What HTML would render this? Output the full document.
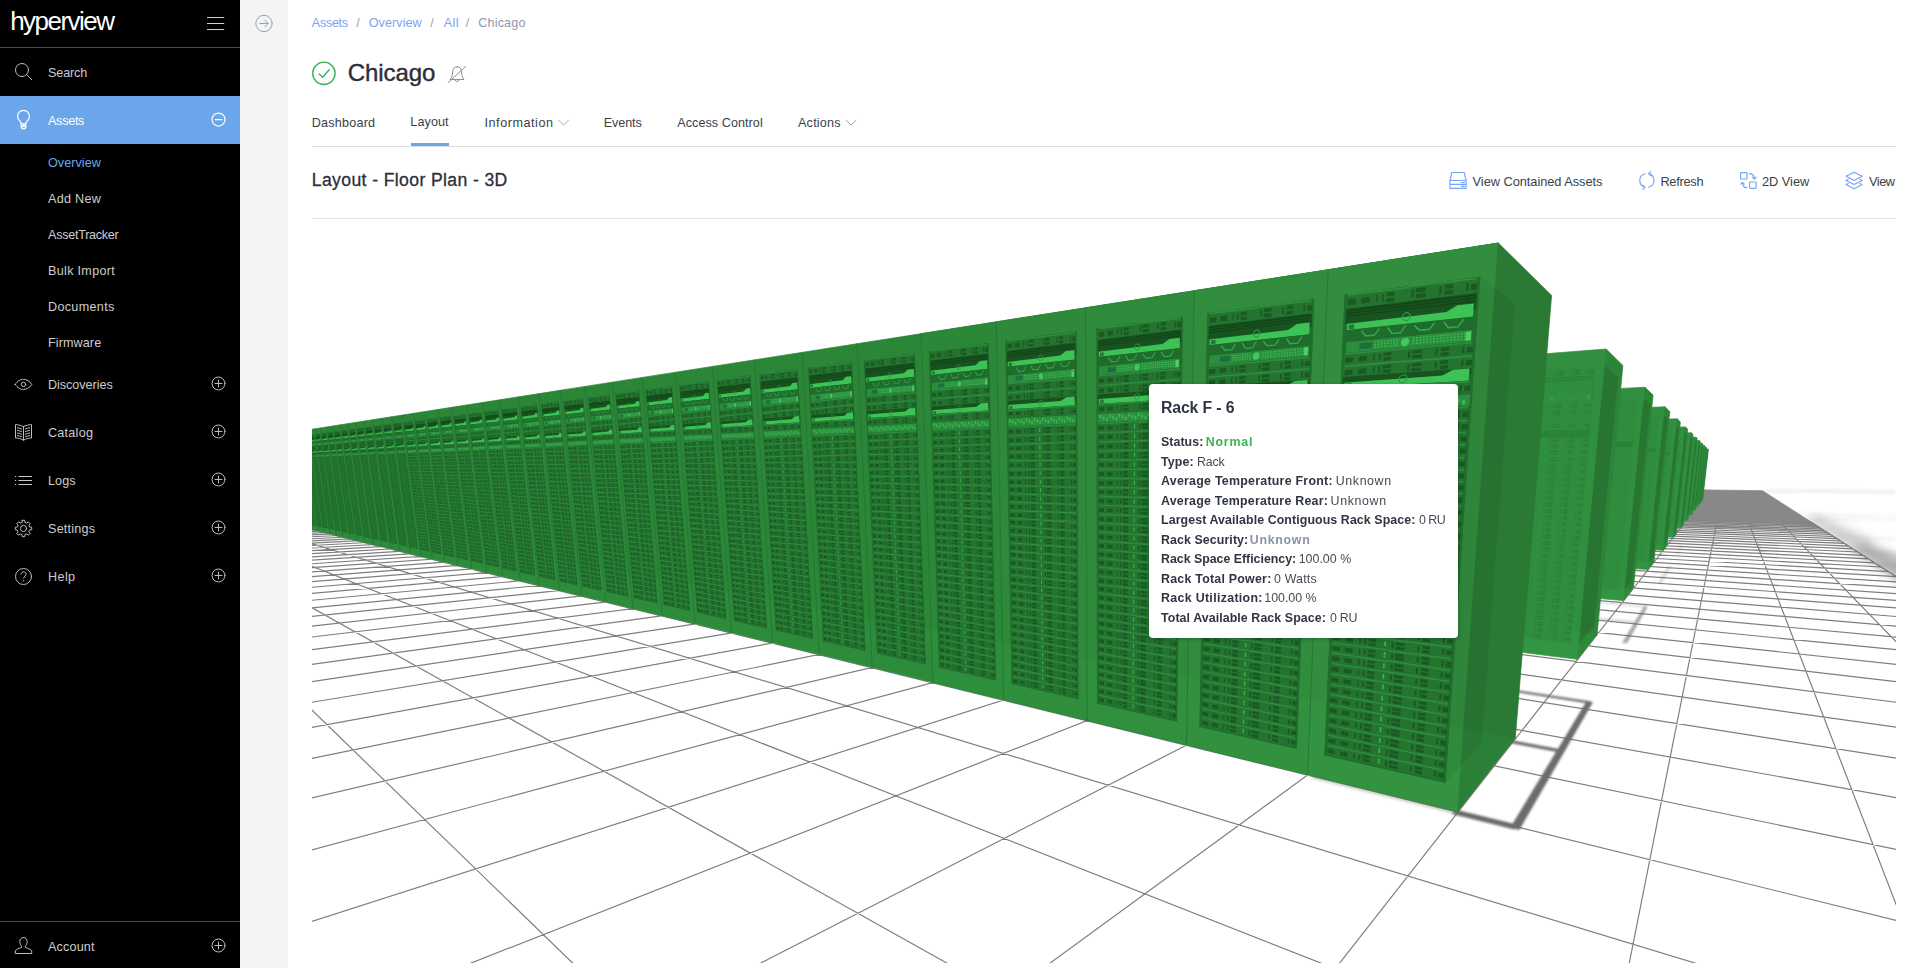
<!DOCTYPE html>
<html lang="en">
<head>
<meta charset="utf-8">
<title>Chicago - Layout - Hyperview</title>
<style>
*{box-sizing:border-box;margin:0;padding:0}
html,body{width:1920px;height:969px;overflow:hidden;background:#fff}
body{font-family:"Liberation Sans","DejaVu Sans",sans-serif;font-size:14px;color:#2a2e36;position:relative}
.abs{position:absolute}
#side{position:absolute;left:0;top:0;width:240px;height:968px;background:#000;color:#d4d4d4}
#strip{position:absolute;left:240px;top:0;width:48px;height:968px;background:#f4f4f4}
#side .hdr{position:absolute;left:0;top:0;width:240px;height:48px;border-bottom:1px solid #4a4a4a}
#side .row{position:absolute;left:0;width:240px;height:48px}
#side .row .lbl{position:absolute;left:48px;top:0;line-height:48px;font-size:13.5px;white-space:nowrap}
#side .row svg.ic{position:absolute;left:14px;top:14px}
#side .row svg.pm{position:absolute;left:210px;top:15px}
#side .sub{position:absolute;left:48px;font-size:13.5px;line-height:36px;height:36px;white-space:nowrap;color:#cfcfcf}
#side .act{background:#6ba5ea;color:#fff}
#side .acct{border-top:1px solid #4a4a4a}
#main{position:absolute;left:288px;top:0;width:1632px;height:969px;background:#fff}
.t{position:absolute;white-space:nowrap;line-height:1}
.bc{font-size:13px;color:#6f9ee8}
.bc.sep{color:#8a8f98}
.bc.cur{color:#8a8f98}
.tab{font-size:13.5px;color:#2f3542}
.tb{font-size:13.5px;color:#2f3542}
#scene{position:absolute;left:312px;top:219px;width:1584px;height:744px;overflow:hidden;background:#fff}
#tip{position:absolute;left:1149px;top:384px;width:309px;height:254px;background:#fff;border-radius:4px;box-shadow:0 1px 4px rgba(0,0,0,.25)}
#tip .h{position:absolute;left:12.5px;top:15px;font-size:16px;font-weight:bold;color:#2f3542;white-space:nowrap;line-height:18px}
#tip .l{position:absolute;left:12.5px;font-size:12.5px;color:#3a3f4a;white-space:nowrap;line-height:16px}
#tip .l b{color:#2f3542}
</style>
</head>
<body>
<div id="main">
</div>
<span class="t" style="left:311.8px;top:16.8px;font-size:12.6px;color:#7ba4ee;letter-spacing:-0.3px;">Assets</span>
<span class="t" style="left:356.3px;top:16.8px;font-size:12.6px;color:#9aa0ab;letter-spacing:1.4px;">/</span>
<span class="t" style="left:368.7px;top:16.8px;font-size:12.6px;color:#7ba4ee;letter-spacing:0.071px;">Overview</span>
<span class="t" style="left:430.3px;top:16.8px;font-size:12.6px;color:#9aa0ab;letter-spacing:1.3px;">/</span>
<span class="t" style="left:443.8px;top:16.8px;font-size:12.6px;color:#7ba4ee;letter-spacing:0.35px;">All</span>
<span class="t" style="left:465.8px;top:16.8px;font-size:12.6px;color:#9aa0ab;letter-spacing:1.3px;">/</span>
<span class="t" style="left:478.2px;top:16.8px;font-size:12.6px;color:#8d98ab;letter-spacing:0.183px;">Chicago</span>
<span class="t" style="left:347.7px;top:60.8px;font-size:24px;color:#2b2f38;letter-spacing:-0.067px;-webkit-text-stroke:0.4px #2b2f38;">Chicago</span>
<span class="t" style="left:311.8px;top:116.8px;font-size:12.6px;color:#3a3f4a;letter-spacing:0.212px;">Dashboard</span>
<span class="t" style="left:410.3px;top:115.8px;font-size:12.6px;color:#3a3f4a;letter-spacing:0.1px;">Layout</span>
<span class="t" style="left:484.5px;top:116.8px;font-size:12.6px;color:#3a3f4a;letter-spacing:0.55px;">Information</span>
<span class="t" style="left:603.7px;top:116.8px;font-size:12.6px;color:#3a3f4a;letter-spacing:-0.08px;">Events</span>
<span class="t" style="left:677.3px;top:116.8px;font-size:12.6px;color:#3a3f4a;letter-spacing:0.054px;">Access Control</span>
<span class="t" style="left:798px;top:116.8px;font-size:12.6px;color:#3a3f4a;letter-spacing:0.217px;">Actions</span>
<span class="t" style="left:311.8px;top:171.8px;font-size:17.6px;color:#2b2f38;letter-spacing:0.378px;-webkit-text-stroke:0.3px #2b2f38;">Layout - Floor Plan - 3D</span>
<span class="t" style="left:1472.6px;top:175.7px;font-size:12.8px;color:#3a3f4a;letter-spacing:-0.04px;">View Contained Assets</span>
<span class="t" style="left:1660.4px;top:175.7px;font-size:12.8px;color:#3a3f4a;letter-spacing:-0.267px;">Refresh</span>
<span class="t" style="left:1762px;top:175.7px;font-size:12.8px;color:#3a3f4a;letter-spacing:-0.033px;">2D View</span>
<span class="t" style="left:1869.1px;top:175.7px;font-size:12.8px;color:#3a3f4a;letter-spacing:-0.533px;">View</span>
<svg class="abs" style="left:310px;top:59px" width="28" height="28" viewBox="310 59 28 28" fill="none" stroke="#3fb157" stroke-width="1.4" stroke-linecap="round" stroke-linejoin="round"><circle cx="323.9" cy="73.3" r="11.2"/><path d="M319.2 73.9L322.6 77.2L329.2 69.8"/></svg>
<svg class="abs" style="left:445px;top:62px" width="24" height="24" viewBox="445 62 24 24" fill="none" stroke="#8a8f99" stroke-width="1" stroke-linecap="round" stroke-linejoin="round"><path d="M457.1 66.7C454.2 66.7 452.7 69 452.7 71.7C452.7 75.4 451.6 77.6 450.2 79.5H464C462.6 77.6 461.5 75.4 461.5 71.7C461.5 69 460 66.7 457.1 66.7Z"/><path d="M455 79.8A2.2 2.4 0 0 0 459.2 79.8"/><path d="M448.2 82.7L465.8 66.3"/></svg>
<svg class="abs" style="left:555px;top:114px" width="17" height="16" viewBox="555 114 17 16" fill="none" stroke="#a0a5af" stroke-width="1" stroke-linecap="round" stroke-linejoin="round"><path d="M558.5 120.2L563.5 125L568.5 120.2"/></svg>
<svg class="abs" style="left:843px;top:114px" width="17" height="16" viewBox="843 114 17 16" fill="none" stroke="#a0a5af" stroke-width="1" stroke-linecap="round" stroke-linejoin="round"><path d="M846 120.2L851 125L856 120.2"/></svg>
<div class="abs" style="left:312px;top:146px;width:1584px;height:1px;background:#dcdcdc"></div>
<div class="abs" style="left:411px;top:143px;width:38px;height:3px;background:#6ba5ea"></div>
<div class="abs" style="left:312px;top:218px;width:1584px;height:1px;background:#e2e2e2"></div>
<svg class="abs" style="left:1446px;top:168px" width="24" height="24" viewBox="1446 168 24 24" fill="none" stroke="#78a5f0" stroke-width="1.15" stroke-linecap="round" stroke-linejoin="round"><path d="M1449.9 180.5L1451.9 172.5H1464.1L1466.1 180.5V188.3H1449.9ZM1449.9 180.5H1466.1M1449.9 184.4H1466.1M1461.4 182.5h3M1461.4 186.4h3"/></svg>
<svg class="abs" style="left:1635px;top:168px" width="24" height="24" viewBox="1635 168 24 24" fill="none" stroke="#78a5f0" stroke-width="1.15" stroke-linecap="round" stroke-linejoin="round"><path d="M1645.2 173.8A6.9 6.9 0 0 0 1644.6 187.1M1648.6 187.2A6.9 6.9 0 0 0 1649.2 173.9"/><path d="M1642.6 185.2L1645 187.3L1642.8 189.4M1651 175.8L1648.7 173.7L1650.9 171.6"/></svg>
<svg class="abs" style="left:1737px;top:168px" width="24" height="24" viewBox="1737 168 24 24" fill="none" stroke="#78a5f0" stroke-width="1.15" stroke-linecap="round" stroke-linejoin="round"><rect x="1740.6" y="172.6" width="6.4" height="6.4" rx="0.8"/><rect x="1749.6" y="182" width="6.6" height="6.4" rx="0.8"/><path d="M1749.4 173.6C1752.4 173.6 1754.3 175.6 1754.4 178.8M1752.4 177.2L1754.4 179.2L1756.4 177.2M1747 187.6C1744.4 187.6 1742.6 185.8 1742.4 182.6M1740.6 184.2L1742.4 182.3L1744.3 184.2"/></svg>
<svg class="abs" style="left:1843px;top:168px" width="24" height="24" viewBox="1843 168 24 24" fill="none" stroke="#78a5f0" stroke-width="1.15" stroke-linecap="round" stroke-linejoin="round"><path d="M1854.1 172.3L1862.2 176.3L1854.1 180.4L1846 176.3ZM1848.2 179.3L1846 180.4L1854.1 184.5L1862.2 180.4L1860 179.3M1848.2 183.5L1846 184.6L1854.1 188.7L1862.2 184.6L1860 183.5"/></svg>
<div id="scene">
<svg width="1584" height="744" viewBox="0 0 1584 744" style="position:absolute;left:0;top:0">
<defs><filter id="b1" x="-20%" y="-20%" width="140%" height="140%"><feGaussianBlur stdDeviation="0.9"/></filter>
<filter id="b2" x="-50%" y="-50%" width="200%" height="200%"><feGaussianBlur stdDeviation="4"/></filter>
<filter id="b3" x="-50%" y="-50%" width="200%" height="200%"><feGaussianBlur stdDeviation="1.6"/></filter>
<g id="txd"><path d="M14.3 17.2h75.8v1.144h-75.8zM14.3 53.2h75.8v0.975h-75.8zM14.3 60.7h75.8v0.975h-75.8zM14.3 75.2h75.8v0.923h-75.8zM14.3 90h75.8v0.9376h-75.8zM14.3 97.21h75.8v0.9376h-75.8zM14.3 104.4h75.8v0.9376h-75.8zM14.3 111.6h75.8v0.9376h-75.8zM14.3 118.8h75.8v0.9376h-75.8zM14.3 126.1h75.8v0.9376h-75.8zM14.3 133.3h75.8v0.9376h-75.8zM14.3 140.5h75.8v0.9376h-75.8zM14.3 147.7h75.8v0.9376h-75.8zM14.3 154.9h75.8v0.9376h-75.8zM14.3 162.1h75.8v0.9376h-75.8zM14.3 169.3h75.8v0.9376h-75.8zM14.3 176.6h75.8v0.9376h-75.8zM14.3 183.8h75.8v0.9376h-75.8zM14.3 191h75.8v0.9376h-75.8zM14.3 198.2h75.8v0.9376h-75.8zM14.3 205.4h75.8v0.9376h-75.8zM14.3 212.6h75.8v0.9376h-75.8zM14.3 219.8h75.8v0.9376h-75.8zM14.3 227h75.8v0.9376h-75.8zM14.3 234.2h75.8v0.9376h-75.8zM14.3 241.5h75.8v0.9376h-75.8zM14.3 248.7h75.8v0.9376h-75.8zM14.3 255.9h75.8v0.9376h-75.8zM14.3 263.1h75.8v0.9376h-75.8zM14.3 270.3h75.8v0.9376h-75.8zM14.3 277.5h75.8v0.9376h-75.8zM14.3 284.7h75.8v0.9376h-75.8zM14.3 292h75.8v0.9376h-75.8zM14.3 299.2h75.8v0.9376h-75.8zM14.3 306.4h75.8v0.9376h-75.8zM14.3 313.6h75.8v0.9376h-75.8z" fill="#2e8f3f"/><path d="M14.5 20.54h5v3.52h-5zM22.9 20.54h5.1v3.52h-5.1zM87.2 20.54h3.6v3.52h-3.6zM38.5 19.31h4.9v2.288h-4.9zM38.5 22.66h4.9v2.288h-4.9zM56.2 19.31h5.5v2.288h-5.5zM56.2 22.66h5.5v2.288h-5.5zM72.5 19.31h4.5v2.288h-4.5zM72.5 22.66h4.5v2.288h-4.5zM32.2 19.84h1v4.4h-1zM35.6 19.84h1.2v4.4h-1.2zM53.8 19.84h1.2v4.4h-1.2zM69.4 19.84h1.2v4.4h-1.2zM84.6 19.84h1.2v4.4h-1.2zM14.5 56.05h5v3h-5zM22.9 56.05h5.1v3h-5.1zM87.2 56.05h3.6v3h-3.6zM38.5 55h4.9v1.95h-4.9zM38.5 57.85h4.9v1.95h-4.9zM56.2 55h5.5v1.95h-5.5zM56.2 57.85h5.5v1.95h-5.5zM72.5 55h4.5v1.95h-4.5zM72.5 57.85h4.5v1.95h-4.5zM32.2 55.45h1v3.75h-1zM35.6 55.45h1.2v3.75h-1.2zM53.8 55.45h1.2v3.75h-1.2zM69.4 55.45h1.2v3.75h-1.2zM84.6 55.45h1.2v3.75h-1.2zM14.5 63.55h5v3h-5zM22.9 63.55h5.1v3h-5.1zM87.2 63.55h3.6v3h-3.6zM38.5 62.5h4.9v1.95h-4.9zM38.5 65.35h4.9v1.95h-4.9zM56.2 62.5h5.5v1.95h-5.5zM56.2 65.35h5.5v1.95h-5.5zM72.5 62.5h4.5v1.95h-4.5zM72.5 65.35h4.5v1.95h-4.5zM32.2 62.95h1v3.75h-1zM35.6 62.95h1.2v3.75h-1.2zM53.8 62.95h1.2v3.75h-1.2zM69.4 62.95h1.2v3.75h-1.2zM84.6 62.95h1.2v3.75h-1.2zM14.5 77.9h5v2.84h-5zM22.9 77.9h5.1v2.84h-5.1zM87.2 77.9h3.6v2.84h-3.6zM38.5 76.9h4.9v1.846h-4.9zM38.5 79.6h4.9v1.846h-4.9zM56.2 76.9h5.5v1.846h-5.5zM56.2 79.6h5.5v1.846h-5.5zM72.5 76.9h4.5v1.846h-4.5zM72.5 79.6h4.5v1.846h-4.5zM32.2 77.33h1v3.55h-1zM35.6 77.33h1.2v3.55h-1.2zM53.8 77.33h1.2v3.55h-1.2zM69.4 77.33h1.2v3.55h-1.2zM84.6 77.33h1.2v3.55h-1.2zM14.5 92.74h5v2.885h-5zM22.9 92.74h5.1v2.885h-5.1zM87.2 92.74h3.6v2.885h-3.6zM38.5 91.73h4.9v1.875h-4.9zM38.5 94.47h4.9v1.875h-4.9zM56.2 91.73h5.5v1.875h-5.5zM56.2 94.47h5.5v1.875h-5.5zM72.5 91.73h4.5v1.875h-4.5zM72.5 94.47h4.5v1.875h-4.5zM32.2 92.16h1v3.606h-1zM35.6 92.16h1.2v3.606h-1.2zM53.8 92.16h1.2v3.606h-1.2zM69.4 92.16h1.2v3.606h-1.2zM84.6 92.16h1.2v3.606h-1.2zM14.5 99.95h5v2.885h-5zM22.9 99.95h5.1v2.885h-5.1zM87.2 99.95h3.6v2.885h-3.6zM38.5 98.94h4.9v1.875h-4.9zM38.5 101.7h4.9v1.875h-4.9zM56.2 98.94h5.5v1.875h-5.5zM56.2 101.7h5.5v1.875h-5.5zM72.5 98.94h4.5v1.875h-4.5zM72.5 101.7h4.5v1.875h-4.5zM32.2 99.38h1v3.606h-1zM35.6 99.38h1.2v3.606h-1.2zM53.8 99.38h1.2v3.606h-1.2zM69.4 99.38h1.2v3.606h-1.2zM84.6 99.38h1.2v3.606h-1.2zM14.5 107.2h5v2.885h-5zM22.9 107.2h5.1v2.885h-5.1zM87.2 107.2h3.6v2.885h-3.6zM38.5 106.2h4.9v1.875h-4.9zM38.5 108.9h4.9v1.875h-4.9zM56.2 106.2h5.5v1.875h-5.5zM56.2 108.9h5.5v1.875h-5.5zM72.5 106.2h4.5v1.875h-4.5zM72.5 108.9h4.5v1.875h-4.5zM32.2 106.6h1v3.606h-1zM35.6 106.6h1.2v3.606h-1.2zM53.8 106.6h1.2v3.606h-1.2zM69.4 106.6h1.2v3.606h-1.2zM84.6 106.6h1.2v3.606h-1.2zM14.5 114.4h5v2.885h-5zM22.9 114.4h5.1v2.885h-5.1zM87.2 114.4h3.6v2.885h-3.6zM38.5 113.4h4.9v1.875h-4.9zM38.5 116.1h4.9v1.875h-4.9zM56.2 113.4h5.5v1.875h-5.5zM56.2 116.1h5.5v1.875h-5.5zM72.5 113.4h4.5v1.875h-4.5zM72.5 116.1h4.5v1.875h-4.5zM32.2 113.8h1v3.606h-1zM35.6 113.8h1.2v3.606h-1.2zM53.8 113.8h1.2v3.606h-1.2zM69.4 113.8h1.2v3.606h-1.2zM84.6 113.8h1.2v3.606h-1.2zM14.5 121.6h5v2.885h-5zM22.9 121.6h5.1v2.885h-5.1zM87.2 121.6h3.6v2.885h-3.6zM38.5 120.6h4.9v1.875h-4.9zM38.5 123.3h4.9v1.875h-4.9zM56.2 120.6h5.5v1.875h-5.5zM56.2 123.3h5.5v1.875h-5.5zM72.5 120.6h4.5v1.875h-4.5zM72.5 123.3h4.5v1.875h-4.5zM32.2 121h1v3.606h-1zM35.6 121h1.2v3.606h-1.2zM53.8 121h1.2v3.606h-1.2zM69.4 121h1.2v3.606h-1.2zM84.6 121h1.2v3.606h-1.2zM14.5 128.8h5v2.885h-5zM22.9 128.8h5.1v2.885h-5.1zM87.2 128.8h3.6v2.885h-3.6zM38.5 127.8h4.9v1.875h-4.9zM38.5 130.5h4.9v1.875h-4.9zM56.2 127.8h5.5v1.875h-5.5zM56.2 130.5h5.5v1.875h-5.5zM72.5 127.8h4.5v1.875h-4.5zM72.5 130.5h4.5v1.875h-4.5zM32.2 128.2h1v3.606h-1zM35.6 128.2h1.2v3.606h-1.2zM53.8 128.2h1.2v3.606h-1.2zM69.4 128.2h1.2v3.606h-1.2zM84.6 128.2h1.2v3.606h-1.2zM14.5 136h5v2.885h-5zM22.9 136h5.1v2.885h-5.1zM87.2 136h3.6v2.885h-3.6zM38.5 135h4.9v1.875h-4.9zM38.5 137.7h4.9v1.875h-4.9zM56.2 135h5.5v1.875h-5.5zM56.2 137.7h5.5v1.875h-5.5zM72.5 135h4.5v1.875h-4.5zM72.5 137.7h4.5v1.875h-4.5zM32.2 135.4h1v3.606h-1zM35.6 135.4h1.2v3.606h-1.2zM53.8 135.4h1.2v3.606h-1.2zM69.4 135.4h1.2v3.606h-1.2zM84.6 135.4h1.2v3.606h-1.2zM14.5 143.2h5v2.885h-5zM22.9 143.2h5.1v2.885h-5.1zM87.2 143.2h3.6v2.885h-3.6zM38.5 142.2h4.9v1.875h-4.9zM38.5 145h4.9v1.875h-4.9zM56.2 142.2h5.5v1.875h-5.5zM56.2 145h5.5v1.875h-5.5zM72.5 142.2h4.5v1.875h-4.5zM72.5 145h4.5v1.875h-4.5zM32.2 142.7h1v3.606h-1zM35.6 142.7h1.2v3.606h-1.2zM53.8 142.7h1.2v3.606h-1.2zM69.4 142.7h1.2v3.606h-1.2zM84.6 142.7h1.2v3.606h-1.2zM14.5 150.4h5v2.885h-5zM22.9 150.4h5.1v2.885h-5.1zM87.2 150.4h3.6v2.885h-3.6zM38.5 149.4h4.9v1.875h-4.9zM38.5 152.2h4.9v1.875h-4.9zM56.2 149.4h5.5v1.875h-5.5zM56.2 152.2h5.5v1.875h-5.5zM72.5 149.4h4.5v1.875h-4.5zM72.5 152.2h4.5v1.875h-4.5zM32.2 149.9h1v3.606h-1zM35.6 149.9h1.2v3.606h-1.2zM53.8 149.9h1.2v3.606h-1.2zM69.4 149.9h1.2v3.606h-1.2zM84.6 149.9h1.2v3.606h-1.2zM14.5 157.7h5v2.885h-5zM22.9 157.7h5.1v2.885h-5.1zM87.2 157.7h3.6v2.885h-3.6zM38.5 156.6h4.9v1.875h-4.9zM38.5 159.4h4.9v1.875h-4.9zM56.2 156.6h5.5v1.875h-5.5zM56.2 159.4h5.5v1.875h-5.5zM72.5 156.6h4.5v1.875h-4.5zM72.5 159.4h4.5v1.875h-4.5zM32.2 157.1h1v3.606h-1zM35.6 157.1h1.2v3.606h-1.2zM53.8 157.1h1.2v3.606h-1.2zM69.4 157.1h1.2v3.606h-1.2zM84.6 157.1h1.2v3.606h-1.2zM14.5 164.9h5v2.885h-5zM22.9 164.9h5.1v2.885h-5.1zM87.2 164.9h3.6v2.885h-3.6zM38.5 163.9h4.9v1.875h-4.9zM38.5 166.6h4.9v1.875h-4.9zM56.2 163.9h5.5v1.875h-5.5zM56.2 166.6h5.5v1.875h-5.5zM72.5 163.9h4.5v1.875h-4.5zM72.5 166.6h4.5v1.875h-4.5zM32.2 164.3h1v3.606h-1zM35.6 164.3h1.2v3.606h-1.2zM53.8 164.3h1.2v3.606h-1.2zM69.4 164.3h1.2v3.606h-1.2zM84.6 164.3h1.2v3.606h-1.2zM14.5 172.1h5v2.885h-5zM22.9 172.1h5.1v2.885h-5.1zM87.2 172.1h3.6v2.885h-3.6zM38.5 171.1h4.9v1.875h-4.9zM38.5 173.8h4.9v1.875h-4.9zM56.2 171.1h5.5v1.875h-5.5zM56.2 173.8h5.5v1.875h-5.5zM72.5 171.1h4.5v1.875h-4.5zM72.5 173.8h4.5v1.875h-4.5zM32.2 171.5h1v3.606h-1zM35.6 171.5h1.2v3.606h-1.2zM53.8 171.5h1.2v3.606h-1.2zM69.4 171.5h1.2v3.606h-1.2zM84.6 171.5h1.2v3.606h-1.2zM14.5 179.3h5v2.885h-5zM22.9 179.3h5.1v2.885h-5.1zM87.2 179.3h3.6v2.885h-3.6zM38.5 178.3h4.9v1.875h-4.9zM38.5 181h4.9v1.875h-4.9zM56.2 178.3h5.5v1.875h-5.5zM56.2 181h5.5v1.875h-5.5zM72.5 178.3h4.5v1.875h-4.5zM72.5 181h4.5v1.875h-4.5zM32.2 178.7h1v3.606h-1zM35.6 178.7h1.2v3.606h-1.2zM53.8 178.7h1.2v3.606h-1.2zM69.4 178.7h1.2v3.606h-1.2zM84.6 178.7h1.2v3.606h-1.2zM14.5 186.5h5v2.885h-5zM22.9 186.5h5.1v2.885h-5.1zM87.2 186.5h3.6v2.885h-3.6zM38.5 185.5h4.9v1.875h-4.9zM38.5 188.2h4.9v1.875h-4.9zM56.2 185.5h5.5v1.875h-5.5zM56.2 188.2h5.5v1.875h-5.5zM72.5 185.5h4.5v1.875h-4.5zM72.5 188.2h4.5v1.875h-4.5zM32.2 185.9h1v3.606h-1zM35.6 185.9h1.2v3.606h-1.2zM53.8 185.9h1.2v3.606h-1.2zM69.4 185.9h1.2v3.606h-1.2zM84.6 185.9h1.2v3.606h-1.2zM14.5 193.7h5v2.885h-5zM22.9 193.7h5.1v2.885h-5.1zM87.2 193.7h3.6v2.885h-3.6zM38.5 192.7h4.9v1.875h-4.9zM38.5 195.4h4.9v1.875h-4.9zM56.2 192.7h5.5v1.875h-5.5zM56.2 195.4h5.5v1.875h-5.5zM72.5 192.7h4.5v1.875h-4.5zM72.5 195.4h4.5v1.875h-4.5zM32.2 193.1h1v3.606h-1zM35.6 193.1h1.2v3.606h-1.2zM53.8 193.1h1.2v3.606h-1.2zM69.4 193.1h1.2v3.606h-1.2zM84.6 193.1h1.2v3.606h-1.2zM14.5 200.9h5v2.885h-5zM22.9 200.9h5.1v2.885h-5.1zM87.2 200.9h3.6v2.885h-3.6zM38.5 199.9h4.9v1.875h-4.9zM38.5 202.7h4.9v1.875h-4.9zM56.2 199.9h5.5v1.875h-5.5zM56.2 202.7h5.5v1.875h-5.5zM72.5 199.9h4.5v1.875h-4.5zM72.5 202.7h4.5v1.875h-4.5zM32.2 200.4h1v3.606h-1zM35.6 200.4h1.2v3.606h-1.2zM53.8 200.4h1.2v3.606h-1.2zM69.4 200.4h1.2v3.606h-1.2zM84.6 200.4h1.2v3.606h-1.2zM14.5 208.1h5v2.885h-5zM22.9 208.1h5.1v2.885h-5.1zM87.2 208.1h3.6v2.885h-3.6zM38.5 207.1h4.9v1.875h-4.9zM38.5 209.9h4.9v1.875h-4.9zM56.2 207.1h5.5v1.875h-5.5zM56.2 209.9h5.5v1.875h-5.5zM72.5 207.1h4.5v1.875h-4.5zM72.5 209.9h4.5v1.875h-4.5zM32.2 207.6h1v3.606h-1zM35.6 207.6h1.2v3.606h-1.2zM53.8 207.6h1.2v3.606h-1.2zM69.4 207.6h1.2v3.606h-1.2zM84.6 207.6h1.2v3.606h-1.2zM14.5 215.4h5v2.885h-5zM22.9 215.4h5.1v2.885h-5.1zM87.2 215.4h3.6v2.885h-3.6zM38.5 214.3h4.9v1.875h-4.9zM38.5 217.1h4.9v1.875h-4.9zM56.2 214.3h5.5v1.875h-5.5zM56.2 217.1h5.5v1.875h-5.5zM72.5 214.3h4.5v1.875h-4.5zM72.5 217.1h4.5v1.875h-4.5zM32.2 214.8h1v3.606h-1zM35.6 214.8h1.2v3.606h-1.2zM53.8 214.8h1.2v3.606h-1.2zM69.4 214.8h1.2v3.606h-1.2zM84.6 214.8h1.2v3.606h-1.2zM14.5 222.6h5v2.885h-5zM22.9 222.6h5.1v2.885h-5.1zM87.2 222.6h3.6v2.885h-3.6zM38.5 221.6h4.9v1.875h-4.9zM38.5 224.3h4.9v1.875h-4.9zM56.2 221.6h5.5v1.875h-5.5zM56.2 224.3h5.5v1.875h-5.5zM72.5 221.6h4.5v1.875h-4.5zM72.5 224.3h4.5v1.875h-4.5zM32.2 222h1v3.606h-1zM35.6 222h1.2v3.606h-1.2zM53.8 222h1.2v3.606h-1.2zM69.4 222h1.2v3.606h-1.2zM84.6 222h1.2v3.606h-1.2zM14.5 229.8h5v2.885h-5zM22.9 229.8h5.1v2.885h-5.1zM87.2 229.8h3.6v2.885h-3.6zM38.5 228.8h4.9v1.875h-4.9zM38.5 231.5h4.9v1.875h-4.9zM56.2 228.8h5.5v1.875h-5.5zM56.2 231.5h5.5v1.875h-5.5zM72.5 228.8h4.5v1.875h-4.5zM72.5 231.5h4.5v1.875h-4.5zM32.2 229.2h1v3.606h-1zM35.6 229.2h1.2v3.606h-1.2zM53.8 229.2h1.2v3.606h-1.2zM69.4 229.2h1.2v3.606h-1.2zM84.6 229.2h1.2v3.606h-1.2zM14.5 237h5v2.885h-5zM22.9 237h5.1v2.885h-5.1zM87.2 237h3.6v2.885h-3.6zM38.5 236h4.9v1.875h-4.9zM38.5 238.7h4.9v1.875h-4.9zM56.2 236h5.5v1.875h-5.5zM56.2 238.7h5.5v1.875h-5.5zM72.5 236h4.5v1.875h-4.5zM72.5 238.7h4.5v1.875h-4.5zM32.2 236.4h1v3.606h-1zM35.6 236.4h1.2v3.606h-1.2zM53.8 236.4h1.2v3.606h-1.2zM69.4 236.4h1.2v3.606h-1.2zM84.6 236.4h1.2v3.606h-1.2zM14.5 244.2h5v2.885h-5zM22.9 244.2h5.1v2.885h-5.1zM87.2 244.2h3.6v2.885h-3.6zM38.5 243.2h4.9v1.875h-4.9zM38.5 245.9h4.9v1.875h-4.9zM56.2 243.2h5.5v1.875h-5.5zM56.2 245.9h5.5v1.875h-5.5zM72.5 243.2h4.5v1.875h-4.5zM72.5 245.9h4.5v1.875h-4.5zM32.2 243.6h1v3.606h-1zM35.6 243.6h1.2v3.606h-1.2zM53.8 243.6h1.2v3.606h-1.2zM69.4 243.6h1.2v3.606h-1.2zM84.6 243.6h1.2v3.606h-1.2zM14.5 251.4h5v2.885h-5zM22.9 251.4h5.1v2.885h-5.1zM87.2 251.4h3.6v2.885h-3.6zM38.5 250.4h4.9v1.875h-4.9zM38.5 253.1h4.9v1.875h-4.9zM56.2 250.4h5.5v1.875h-5.5zM56.2 253.1h5.5v1.875h-5.5zM72.5 250.4h4.5v1.875h-4.5zM72.5 253.1h4.5v1.875h-4.5zM32.2 250.8h1v3.606h-1zM35.6 250.8h1.2v3.606h-1.2zM53.8 250.8h1.2v3.606h-1.2zM69.4 250.8h1.2v3.606h-1.2zM84.6 250.8h1.2v3.606h-1.2zM14.5 258.6h5v2.885h-5zM22.9 258.6h5.1v2.885h-5.1zM87.2 258.6h3.6v2.885h-3.6zM38.5 257.6h4.9v1.875h-4.9zM38.5 260.4h4.9v1.875h-4.9zM56.2 257.6h5.5v1.875h-5.5zM56.2 260.4h5.5v1.875h-5.5zM72.5 257.6h4.5v1.875h-4.5zM72.5 260.4h4.5v1.875h-4.5zM32.2 258.1h1v3.606h-1zM35.6 258.1h1.2v3.606h-1.2zM53.8 258.1h1.2v3.606h-1.2zM69.4 258.1h1.2v3.606h-1.2zM84.6 258.1h1.2v3.606h-1.2zM14.5 265.8h5v2.885h-5zM22.9 265.8h5.1v2.885h-5.1zM87.2 265.8h3.6v2.885h-3.6zM38.5 264.8h4.9v1.875h-4.9zM38.5 267.6h4.9v1.875h-4.9zM56.2 264.8h5.5v1.875h-5.5zM56.2 267.6h5.5v1.875h-5.5zM72.5 264.8h4.5v1.875h-4.5zM72.5 267.6h4.5v1.875h-4.5zM32.2 265.3h1v3.606h-1zM35.6 265.3h1.2v3.606h-1.2zM53.8 265.3h1.2v3.606h-1.2zM69.4 265.3h1.2v3.606h-1.2zM84.6 265.3h1.2v3.606h-1.2zM14.5 273.1h5v2.885h-5zM22.9 273.1h5.1v2.885h-5.1zM87.2 273.1h3.6v2.885h-3.6zM38.5 272h4.9v1.875h-4.9zM38.5 274.8h4.9v1.875h-4.9zM56.2 272h5.5v1.875h-5.5zM56.2 274.8h5.5v1.875h-5.5zM72.5 272h4.5v1.875h-4.5zM72.5 274.8h4.5v1.875h-4.5zM32.2 272.5h1v3.606h-1zM35.6 272.5h1.2v3.606h-1.2zM53.8 272.5h1.2v3.606h-1.2zM69.4 272.5h1.2v3.606h-1.2zM84.6 272.5h1.2v3.606h-1.2zM14.5 280.3h5v2.885h-5zM22.9 280.3h5.1v2.885h-5.1zM87.2 280.3h3.6v2.885h-3.6zM38.5 279.3h4.9v1.875h-4.9zM38.5 282h4.9v1.875h-4.9zM56.2 279.3h5.5v1.875h-5.5zM56.2 282h5.5v1.875h-5.5zM72.5 279.3h4.5v1.875h-4.5zM72.5 282h4.5v1.875h-4.5zM32.2 279.7h1v3.606h-1zM35.6 279.7h1.2v3.606h-1.2zM53.8 279.7h1.2v3.606h-1.2zM69.4 279.7h1.2v3.606h-1.2zM84.6 279.7h1.2v3.606h-1.2zM14.5 287.5h5v2.885h-5zM22.9 287.5h5.1v2.885h-5.1zM87.2 287.5h3.6v2.885h-3.6zM38.5 286.5h4.9v1.875h-4.9zM38.5 289.2h4.9v1.875h-4.9zM56.2 286.5h5.5v1.875h-5.5zM56.2 289.2h5.5v1.875h-5.5zM72.5 286.5h4.5v1.875h-4.5zM72.5 289.2h4.5v1.875h-4.5zM32.2 286.9h1v3.606h-1zM35.6 286.9h1.2v3.606h-1.2zM53.8 286.9h1.2v3.606h-1.2zM69.4 286.9h1.2v3.606h-1.2zM84.6 286.9h1.2v3.606h-1.2zM14.5 294.7h5v2.885h-5zM22.9 294.7h5.1v2.885h-5.1zM87.2 294.7h3.6v2.885h-3.6zM38.5 293.7h4.9v1.875h-4.9zM38.5 296.4h4.9v1.875h-4.9zM56.2 293.7h5.5v1.875h-5.5zM56.2 296.4h5.5v1.875h-5.5zM72.5 293.7h4.5v1.875h-4.5zM72.5 296.4h4.5v1.875h-4.5zM32.2 294.1h1v3.606h-1zM35.6 294.1h1.2v3.606h-1.2zM53.8 294.1h1.2v3.606h-1.2zM69.4 294.1h1.2v3.606h-1.2zM84.6 294.1h1.2v3.606h-1.2zM14.5 301.9h5v2.885h-5zM22.9 301.9h5.1v2.885h-5.1zM87.2 301.9h3.6v2.885h-3.6zM38.5 300.9h4.9v1.875h-4.9zM38.5 303.6h4.9v1.875h-4.9zM56.2 300.9h5.5v1.875h-5.5zM56.2 303.6h5.5v1.875h-5.5zM72.5 300.9h4.5v1.875h-4.5zM72.5 303.6h4.5v1.875h-4.5zM32.2 301.3h1v3.606h-1zM35.6 301.3h1.2v3.606h-1.2zM53.8 301.3h1.2v3.606h-1.2zM69.4 301.3h1.2v3.606h-1.2zM84.6 301.3h1.2v3.606h-1.2zM14.5 309.1h5v2.885h-5zM22.9 309.1h5.1v2.885h-5.1zM87.2 309.1h3.6v2.885h-3.6zM38.5 308.1h4.9v1.875h-4.9zM38.5 310.8h4.9v1.875h-4.9zM56.2 308.1h5.5v1.875h-5.5zM56.2 310.8h5.5v1.875h-5.5zM72.5 308.1h4.5v1.875h-4.5zM72.5 310.8h4.5v1.875h-4.5zM32.2 308.5h1v3.606h-1zM35.6 308.5h1.2v3.606h-1.2zM53.8 308.5h1.2v3.606h-1.2zM69.4 308.5h1.2v3.606h-1.2zM84.6 308.5h1.2v3.606h-1.2zM14.5 316.3h5v2.885h-5zM22.9 316.3h5.1v2.885h-5.1zM87.2 316.3h3.6v2.885h-3.6zM38.5 315.3h4.9v1.875h-4.9zM38.5 318.1h4.9v1.875h-4.9zM56.2 315.3h5.5v1.875h-5.5zM56.2 318.1h5.5v1.875h-5.5zM72.5 315.3h4.5v1.875h-4.5zM72.5 318.1h4.5v1.875h-4.5zM32.2 315.8h1v3.606h-1zM35.6 315.8h1.2v3.606h-1.2zM53.8 315.8h1.2v3.606h-1.2zM69.4 315.8h1.2v3.606h-1.2zM84.6 315.8h1.2v3.606h-1.2z" fill="#1a5824"/><path d="M49 92.16h1.1v3.246h-1.1zM49 99.38h1.1v3.246h-1.1zM49 106.6h1.1v3.246h-1.1zM49 113.8h1.1v3.246h-1.1zM49 121h1.1v3.246h-1.1zM49 128.2h1.1v3.246h-1.1zM49 135.4h1.1v3.246h-1.1zM49 142.7h1.1v3.246h-1.1zM49 149.9h1.1v3.246h-1.1zM49 157.1h1.1v3.246h-1.1zM49 164.3h1.1v3.246h-1.1zM49 171.5h1.1v3.246h-1.1zM49 178.7h1.1v3.246h-1.1zM49 185.9h1.1v3.246h-1.1zM49 193.1h1.1v3.246h-1.1zM49 200.4h1.1v3.246h-1.1zM49 207.6h1.1v3.246h-1.1zM49 214.8h1.1v3.246h-1.1zM49 222h1.1v3.246h-1.1zM49 229.2h1.1v3.246h-1.1zM49 236.4h1.1v3.246h-1.1zM49 243.6h1.1v3.246h-1.1zM49 250.8h1.1v3.246h-1.1zM49 258.1h1.1v3.246h-1.1zM49 265.3h1.1v3.246h-1.1zM49 272.5h1.1v3.246h-1.1zM49 279.7h1.1v3.246h-1.1zM49 286.9h1.1v3.246h-1.1zM49 294.1h1.1v3.246h-1.1zM49 301.3h1.1v3.246h-1.1zM49 308.5h1.1v3.246h-1.1zM49 315.8h1.1v3.246h-1.1z" fill="#3bb551"/><path d="M14.3 26.8h75.8v0.7h-75.8zM14.3 28.5h75.8v0.7h-75.8zM14.3 30.2h75.8v0.7h-75.8z" fill="#124419"/><circle cx="51.5" cy="34.9" r="2.3" fill="none" stroke="#2c9a43" stroke-width="0.7"/><circle cx="51.5" cy="71.4" r="2.3" fill="none" stroke="#2c9a43" stroke-width="0.7"/><path d="M15.8 35.9h3.4v2.6h-3.4zM15.8 72.2h3.4v2.6h-3.4z" fill="#1f7a31"/><path d="M23.8 40.2l2.8 3.6h5.6l2.8-3.6m5.2 0l2.8 3.6h5.6l2.8-3.6m5.2 0l2.8 3.6h5.6l2.8-3.6m5.2 0l2.8 3.6h5.6l2.8-3.6m5.2 0" stroke="#35aa4c" stroke-width="0.9" fill="none"/><rect x="23" y="48" width="8" height="3.6" fill="#1d6f40"/><circle cx="51.5" cy="49.7" r="2.5" fill="#43c65a"/><path d="M32.5 47.6h1v0.8h-1zM32.5 49.15h1v0.8h-1zM32.5 50.7h1v0.8h-1zM34.45 47.6h1v0.8h-1zM34.45 49.15h1v0.8h-1zM34.45 50.7h1v0.8h-1zM36.4 47.6h1v0.8h-1zM36.4 49.15h1v0.8h-1zM36.4 50.7h1v0.8h-1zM38.35 47.6h1v0.8h-1zM38.35 49.15h1v0.8h-1zM38.35 50.7h1v0.8h-1zM40.3 47.6h1v0.8h-1zM40.3 49.15h1v0.8h-1zM40.3 50.7h1v0.8h-1zM42.25 47.6h1v0.8h-1zM42.25 49.15h1v0.8h-1zM42.25 50.7h1v0.8h-1zM44.2 47.6h1v0.8h-1zM44.2 49.15h1v0.8h-1zM44.2 50.7h1v0.8h-1zM46.15 47.6h1v0.8h-1zM46.15 49.15h1v0.8h-1zM46.15 50.7h1v0.8h-1zM55.9 47.6h1v0.8h-1zM55.9 49.15h1v0.8h-1zM55.9 50.7h1v0.8h-1zM57.85 47.6h1v0.8h-1zM57.85 49.15h1v0.8h-1zM57.85 50.7h1v0.8h-1zM59.8 47.6h1v0.8h-1zM59.8 49.15h1v0.8h-1zM59.8 50.7h1v0.8h-1zM61.75 47.6h1v0.8h-1zM61.75 49.15h1v0.8h-1zM61.75 50.7h1v0.8h-1zM63.7 47.6h1v0.8h-1zM63.7 49.15h1v0.8h-1zM63.7 50.7h1v0.8h-1zM65.65 47.6h1v0.8h-1zM65.65 49.15h1v0.8h-1zM65.65 50.7h1v0.8h-1zM67.6 47.6h1v0.8h-1zM67.6 49.15h1v0.8h-1zM67.6 50.7h1v0.8h-1zM69.55 47.6h1v0.8h-1zM69.55 49.15h1v0.8h-1zM69.55 50.7h1v0.8h-1zM71.5 47.6h1v0.8h-1zM71.5 49.15h1v0.8h-1zM71.5 50.7h1v0.8h-1zM73.45 47.6h1v0.8h-1zM73.45 49.15h1v0.8h-1zM73.45 50.7h1v0.8h-1zM75.4 47.6h1v0.8h-1zM75.4 49.15h1v0.8h-1zM75.4 50.7h1v0.8h-1zM77.35 47.6h1v0.8h-1zM77.35 49.15h1v0.8h-1zM77.35 50.7h1v0.8h-1zM79.3 47.6h1v0.8h-1zM79.3 49.15h1v0.8h-1zM79.3 50.7h1v0.8h-1zM81.25 47.6h1v0.8h-1zM81.25 49.15h1v0.8h-1zM81.25 50.7h1v0.8h-1zM83.2 47.6h1v0.8h-1zM83.2 49.15h1v0.8h-1zM83.2 50.7h1v0.8h-1zM85.15 47.6h1v0.8h-1zM85.15 49.15h1v0.8h-1zM85.15 50.7h1v0.8h-1z" fill="#3fbd56"/><rect x="86.1" y="47" width="3" height="5.2" fill="#4bd062"/><path d="M15.3 83.7h1.6v2.6h-1.6zM18.4 84.9h1.6v2.6h-1.6zM21.5 86.1h1.6v2.6h-1.6zM24.6 83.7h1.6v2.6h-1.6zM27.7 84.9h1.6v2.6h-1.6zM30.8 86.1h1.6v2.6h-1.6zM33.9 83.7h1.6v2.6h-1.6zM37 84.9h1.6v2.6h-1.6zM40.1 86.1h1.6v2.6h-1.6zM43.2 83.7h1.6v2.6h-1.6zM46.3 84.9h1.6v2.6h-1.6zM49.4 86.1h1.6v2.6h-1.6zM52.5 83.7h1.6v2.6h-1.6zM55.6 84.9h1.6v2.6h-1.6zM58.7 86.1h1.6v2.6h-1.6zM61.8 83.7h1.6v2.6h-1.6zM64.9 84.9h1.6v2.6h-1.6zM68 86.1h1.6v2.6h-1.6zM71.1 83.7h1.6v2.6h-1.6zM74.2 84.9h1.6v2.6h-1.6zM77.3 86.1h1.6v2.6h-1.6zM80.4 83.7h1.6v2.6h-1.6zM83.5 84.9h1.6v2.6h-1.6zM86.6 86.1h1.6v2.6h-1.6z" fill="#3db954"/><path d="M12.3 17.2h1.2v304.6h-1.2zM90.9 17.2h1.2v304.6h-1.2z" fill="#216f2d"/></g>
<g id="txf"><polygon points="12.3,17.2 92.1,17.2 92.1,321.8 12.3,321.8" fill="#206d2c"/><polygon points="13.8,17.2 90.6,17.2 90.6,26 13.8,26" fill="#247430"/><polygon points="13.3,26 91.1,26 91.1,34.9 13.3,34.9" fill="#18531f"/><polygon points="14.8,35.2 74.64,34.77 80.62,31.7 89.6,31.7 89.6,39 14.8,39" fill="#37b34e"/><polygon points="14.8,39.2 89.6,39.2 89.6,46 14.8,46" fill="#1f6c2c"/><polygon points="14.8,46.4 89.6,46.4 89.6,52.9 14.8,52.9" fill="#2b8e3f"/><polygon points="13.8,53.2 90.6,53.2 90.6,68.2 13.8,68.2" fill="#247430"/><polygon points="13.3,67.9 91.1,67.9 91.1,71.4 13.3,71.4" fill="#18531f"/><polygon points="14.8,71.46 74.64,71.06 80.62,68.2 89.6,68.2 89.6,75 14.8,75" fill="#37b34e"/><polygon points="13.8,75.2 90.6,75.2 90.6,82.3 13.8,82.3" fill="#247430"/><polygon points="13.3,82.9 91.1,82.9 91.1,89.5 13.3,89.5" fill="#2c8f3f"/><polygon points="14.3,90 90.1,90 90.1,320.8 14.3,320.8" fill="#247430"/><path d="M14.5 90h5v230.8h-5zM22.9 90h5.1v230.8h-5.1zM87.2 90h3.6v230.8h-3.6zM38.5 90h4.9v230.8h-4.9zM56.2 90h5.5v230.8h-5.5zM72.5 90h4.5v230.8h-4.5z" fill="#1e6a2a"/><path d="M49 90h1.6v230.8h-1.6z" fill="#2a8a3b"/><path d="M14.3 19.2h75.8v5h-75.8zM14.3 55.2h75.8v11h-75.8zM14.3 77h75.8v4h-75.8z" fill="#1e6329"/><path d="M49.5 33.7h4v3.5h-4zM49.5 48h4v3.5h-4zM49.5 70.2h4v3.5h-4z" fill="#4ad263"/></g>
<clipPath id="k0"><rect x="12.15" y="17.05" width="80.1" height="38.38"/></clipPath>
<clipPath id="k1"><rect x="12.15" y="55.13" width="80.1" height="38.38"/></clipPath>
<clipPath id="k2"><rect x="12.15" y="93.2" width="80.1" height="38.38"/></clipPath>
<clipPath id="k3"><rect x="12.15" y="131.3" width="80.1" height="38.37"/></clipPath>
<clipPath id="k4"><rect x="12.15" y="169.3" width="80.1" height="38.37"/></clipPath>
<clipPath id="k5"><rect x="12.15" y="207.4" width="80.1" height="38.38"/></clipPath>
<clipPath id="k6"><rect x="12.15" y="245.5" width="80.1" height="38.38"/></clipPath>
<clipPath id="k7"><rect x="12.15" y="283.6" width="80.1" height="38.37"/></clipPath>
<clipPath id="k8"><rect x="12.15" y="17.05" width="80.1" height="76.45"/></clipPath>
<clipPath id="k9"><rect x="12.15" y="93.2" width="80.1" height="76.45"/></clipPath>
<clipPath id="k10"><rect x="12.15" y="169.3" width="80.1" height="76.45"/></clipPath>
<clipPath id="k11"><rect x="12.15" y="245.5" width="80.1" height="76.45"/></clipPath>
<clipPath id="k12"><rect x="12.15" y="17.05" width="80.1" height="51.07"/></clipPath>
<clipPath id="k13"><rect x="12.15" y="67.82" width="80.1" height="51.07"/></clipPath>
<clipPath id="k14"><rect x="12.15" y="118.6" width="80.1" height="51.07"/></clipPath>
<clipPath id="k15"><rect x="12.15" y="169.3" width="80.1" height="51.07"/></clipPath>
<clipPath id="k16"><rect x="12.15" y="220.1" width="80.1" height="51.07"/></clipPath>
<clipPath id="k17"><rect x="12.15" y="270.9" width="80.1" height="51.07"/></clipPath>
<clipPath id="k18"><rect x="12.15" y="17.05" width="80.1" height="30.76"/></clipPath>
<clipPath id="k19"><rect x="12.15" y="47.51" width="80.1" height="30.76"/></clipPath>
<clipPath id="k20"><rect x="12.15" y="77.97" width="80.1" height="30.76"/></clipPath>
<clipPath id="k21"><rect x="12.15" y="108.4" width="80.1" height="30.76"/></clipPath>
<clipPath id="k22"><rect x="12.15" y="138.9" width="80.1" height="30.76"/></clipPath>
<clipPath id="k23"><rect x="12.15" y="169.3" width="80.1" height="30.76"/></clipPath>
<clipPath id="k24"><rect x="12.15" y="199.8" width="80.1" height="30.76"/></clipPath>
<clipPath id="k25"><rect x="12.15" y="230.3" width="80.1" height="30.76"/></clipPath>
<clipPath id="k26"><rect x="12.15" y="260.7" width="80.1" height="30.76"/></clipPath>
<clipPath id="k27"><rect x="12.15" y="291.2" width="80.1" height="30.76"/></clipPath>
<clipPath id="k28"><rect x="12.15" y="17.05" width="40.2" height="25.68"/></clipPath>
<clipPath id="k29"><rect x="12.15" y="42.43" width="40.2" height="25.68"/></clipPath>
<clipPath id="k30"><rect x="12.15" y="67.82" width="40.2" height="25.68"/></clipPath>
<clipPath id="k31"><rect x="12.15" y="93.2" width="40.2" height="25.68"/></clipPath>
<clipPath id="k32"><rect x="12.15" y="118.6" width="40.2" height="25.68"/></clipPath>
<clipPath id="k33"><rect x="12.15" y="144" width="40.2" height="25.68"/></clipPath>
<clipPath id="k34"><rect x="12.15" y="169.3" width="40.2" height="25.68"/></clipPath>
<clipPath id="k35"><rect x="12.15" y="194.7" width="40.2" height="25.68"/></clipPath>
<clipPath id="k36"><rect x="12.15" y="220.1" width="40.2" height="25.68"/></clipPath>
<clipPath id="k37"><rect x="12.15" y="245.5" width="40.2" height="25.68"/></clipPath>
<clipPath id="k38"><rect x="12.15" y="270.9" width="40.2" height="25.68"/></clipPath>
<clipPath id="k39"><rect x="12.15" y="296.3" width="40.2" height="25.68"/></clipPath>
<clipPath id="k40"><rect x="52.05" y="17.05" width="40.2" height="25.68"/></clipPath>
<clipPath id="k41"><rect x="52.05" y="42.43" width="40.2" height="25.68"/></clipPath>
<clipPath id="k42"><rect x="52.05" y="67.82" width="40.2" height="25.68"/></clipPath>
<clipPath id="k43"><rect x="52.05" y="93.2" width="40.2" height="25.68"/></clipPath>
<clipPath id="k44"><rect x="52.05" y="118.6" width="40.2" height="25.68"/></clipPath>
<clipPath id="k45"><rect x="52.05" y="144" width="40.2" height="25.68"/></clipPath>
<clipPath id="k46"><rect x="52.05" y="169.3" width="40.2" height="25.68"/></clipPath>
<clipPath id="k47"><rect x="52.05" y="194.7" width="40.2" height="25.68"/></clipPath>
<clipPath id="k48"><rect x="52.05" y="220.1" width="40.2" height="25.68"/></clipPath>
<clipPath id="k49"><rect x="52.05" y="245.5" width="40.2" height="25.68"/></clipPath>
<clipPath id="k50"><rect x="52.05" y="270.9" width="40.2" height="25.68"/></clipPath>
<clipPath id="k51"><rect x="52.05" y="296.3" width="40.2" height="25.68"/></clipPath></defs>
<path d="M1500.6 303.9L1589 360.7M1467.6 302.9L1589 427.8M1435.9 301.9L1589 698.1M1405.3 301L1316.3 749M1375.8 300L1023.8 749M1347.3 299.1L731.4 749M1319.8 298.3L439 749M1293.3 297.5L146.5 749M1267.6 296.7L-5 703.9M1242.8 295.9L-5 632.2M1218.7 295.1L-5 580M1195.5 294.4L-5 540.4M1172.9 293.7L-5 509.2M1151.1 293L-5 484.1M1129.9 292.4L-5 463.4M1109.3 291.7L-5 446M1089.4 291.1L-5 431.3M1070 290.5L-5 418.6M1051.2 289.9L-5 407.6M1032.9 289.3L-5 397.9M1015.1 288.8L-5 389.3M997.8 288.2L-5 381.7M981 287.7L-5 374.8M964.6 287.2L-5 368.7M948.6 286.7L-5 363.1M933.1 286.2L-5 358M917.9 285.7L-5 353.3M903.2 285.3L-5 349M888.8 284.8L-5 345.1M874.8 284.4L-5 341.5M861.1 284L-5 338.1M847.7 283.6L-5 335M834.6 283.1L-5 332M821.9 282.7L-5 329.3M809.5 282.4L-5 326.8M797.3 282L-5 324.4M785.4 281.6L-5 322.1M773.8 281.2L-5 320M762.5 280.9L-5 318M751.4 280.5L-5 316.1M740.5 280.2L-5 314.3M729.9 279.9L-5 312.6M719.4 279.5L-5 311M709.3 279.2L-5 309.5M699.3 278.9L-5 308M689.5 278.6L-5 306.6M679.9 278.3L-5 305.3M670.6 278L-5 304.1M661.4 277.7L-5 302.9M652.4 277.5L-5 301.7M643.5 277.2L-5 300.6M634.9 276.9L-5 299.5M626.4 276.6L-5 298.5M618 276.4L-5 297.5M609.9 276.1L-5 296.6M601.9 275.9L-5 295.7M594 275.6L-5 294.8M586.2 275.4L-5 294M578.7 275.2L-5 293.2M571.2 274.9L-5 292.4M563.9 274.7L-5 291.6M556.7 274.5L-5 290.9M549.6 274.2L-5 290.2M542.7 274L-5 289.5M535.9 273.8L-5 288.9M529.2 273.6L-5 288.3M522.6 273.4L-5 287.6M516.1 273.2L-5 287M509.7 273L-5 286.5M503.4 272.8L-5 285.9M497.3 272.6L-5 285.4M491.2 272.4L-5 284.8M485.3 272.2L-5 284.3M479.4 272.1L-5 283.8M473.6 271.9L-5 283.3M467.9 271.7L-5 282.9M462.3 271.5L-5 282.4M456.8 271.4L-5 282M451.4 271.2L-5 281.5M446 271L-5 281.1M440.8 270.9L-5 280.7M435.6 270.7L-5 280.3M430.5 270.5L-5 279.9M425.4 270.4L-5 279.5M420.5 270.2L-5 279.2M1498.5 302.6L429.8 270M1500.6 303.9L420.5 270.2M1502.8 305.3L410.9 270.4M1505 306.8L401.2 270.6M1507.4 308.3L391.3 270.8M1510 310L381.2 271M1512.6 311.7L370.9 271.3M1515.5 313.5L360.4 271.5M1518.5 315.4L349.6 271.7M1521.7 317.5L338.7 271.9M1525.1 319.6L327.5 272.2M1528.7 322L316.1 272.4M1532.5 324.4L304.4 272.7M1536.7 327.1L292.5 272.9M1541.1 329.9L280.4 273.2M1545.9 333L267.9 273.4M1551 336.3L255.2 273.7M1556.6 339.9L242.2 274M1562.6 343.8L228.9 274.2M1569.2 348L215.3 274.5M1576.4 352.6L201.4 274.8M1584.4 357.7L187.2 275.1M1589 363.1L172.6 275.4M1589 368.7L157.7 275.7M1589 374.9L142.4 276.1M1589 381.7L126.8 276.4M1589 389.3L110.7 276.7M1589 397.9L94.3 277.1M1589 407.5L77.4 277.4M1589 418.6L60.1 277.8M1589 431.2L42.3 278.2M1589 445.9L24.1 278.5M1589 463.2L5.4 278.9M1589 483.9L-5 280.5M1589 508.9L-5 283.8M1589 540L-5 287.9M1589 579.5L-5 293.2M1589 631.4L-5 300.1M1589 702.6L-5 309.5M1399.3 749L-5 323.3M1021.4 749L-5 345.3M643.6 749L-5 386M265.7 749L-5 486.3" stroke="#7e7e7e" stroke-width="1.18" fill="none"/>
<polygon points="1450.4,271.7 773.9,262.8 410.9,270.4 1502.8,305.3" fill="#888888" stroke="#888888" stroke-width="0.8"/>
<polygon points="1502.8,305.3 410.9,270.4 360.4,271.5 1515.5,313.5" fill="rgba(136,136,136,0.35)"/>
<g filter="url(#b2)"><polygon points="1539.1,329.9 1593.1,367.4 1599.1,341.4 1555.1,323.9" fill="#666" opacity="0.5"/><polygon points="1492.7,300.1 1541.1,331.9 1563.1,321.9 1504.7,296.1" fill="#666" opacity="0.3"/></g>
<g filter="url(#b3)"><path d="M1450.4 271.7L1583.4 272.9" stroke="#444" stroke-opacity="0.16" stroke-width="1.6"/><path d="M1488 295.9L1584 297.1" stroke="#444" stroke-opacity="0.07" stroke-width="1.6"/><path d="M1494.7 300.1L1584 301.3" stroke="#444" stroke-opacity="0.08" stroke-width="1.6"/><path d="M1523.3 318.5L1584 319.7" stroke="#444" stroke-opacity="0.1" stroke-width="1.6"/><path d="M1545.9 333L1584 334.2" stroke="#444" stroke-opacity="0.12" stroke-width="1.6"/><path d="M1565.9 345.9L1584 347.1" stroke="#444" stroke-opacity="0.12" stroke-width="1.6"/></g>
<g filter="url(#b1)"><g opacity="1"><polygon points="1207.4,611 1198.2,608.7 1274.7,482.1 1281,483.1" fill="#6c6c6c"/><polygon points="1202.3,610.5 1139.7,595 1143.3,590.5 1205.2,605.6" fill="#6c6c6c"/><polygon points="1143.5,595.3 999.2,559.5 1001.7,557.7 1145.3,593.1" fill="#6c6c6c" opacity="0.35"/><polygon points="1247.8,533.6 1145.3,514.1 1148.1,511.5 1249.6,530.5" fill="#6c6c6c"/><polygon points="1276.8,484.4 1167.3,467.5 1169.4,465.7 1278,482.3" fill="#6c6c6c"/></g><g opacity="0.6"><polygon points="1314.9,424.2 1310.1,423.7 1332.1,387.3 1335.9,387.6" fill="#6c6c6c"/><polygon points="1324.3,403.9 1263.9,397.9 1264.8,397.1 1324.9,403" fill="#6c6c6c"/><polygon points="1333.7,388.1 1264.6,382 1265.4,381.4 1334.1,387.3" fill="#6c6c6c"/></g><g opacity="0.3"><polygon points="1349.2,364.6 1345.9,364.4 1356.3,347.3 1359,347.5" fill="#6c6c6c"/><polygon points="1352.9,355.4 1310.2,352.6 1310.6,352.2 1353.2,355" fill="#6c6c6c"/><polygon points="1357.5,347.7 1307.1,344.7 1307.5,344.3 1357.7,347.4" fill="#6c6c6c"/></g><g opacity="0.18"><polygon points="1366,335.3 1363.6,335.2 1369.6,325.3 1371.7,325.4" fill="#6c6c6c"/><polygon points="1367.9,330.1 1334.8,328.5 1335,328.2 1368,329.9" fill="#6c6c6c"/><polygon points="1370.5,325.6 1330.9,323.7 1331.2,323.5 1370.7,325.4" fill="#6c6c6c"/></g></g>
<polygon points="1390,281.8 1395.9,230 1323.3,230.8 1318.4,280.4" fill="#30903f" stroke="#30903f" stroke-width="0.7"/>
<polygon points="1395.9,230 1396.4,230.5 1390.6,281 1390,281.8" fill="#2c8438" stroke="#2c8438" stroke-width="0.7"/>
<polygon points="1395.9,230 1396.4,230.5 1325.6,231.3 1323.3,230.8" fill="rgba(80,255,120,0.0)"/>
<polygon points="1390,281.8 1390.6,281 1320.7,279.6 1318.4,280.4" fill="rgba(80,255,120,0.05)"/>
<polygon points="1395.6,232.6 1396,233 1390.8,278.6 1390.3,279.2" fill="rgba(0,0,0,0.11)"/>
<path d="M1340.5 233.2L1339 233.2L1334.4 278.1L1335.9 278.2ZM1358.4 233L1356.9 233L1352.1 278.5L1353.6 278.5ZM1376.8 232.8L1375.2 232.8L1370.2 278.8L1371.7 278.8Z" fill="rgba(0,0,0,0)"/>
<polygon points="1325.2,233.4 1339.2,233.2 1334.6,278.2 1320.7,277.9" fill="#2f8e3d"/>
<polygon points="1324.2,243.2 1338.2,243.1 1338,244.3 1324.1,244.4" fill="#2a8337"/>
<polygon points="1342.8,233.2 1357.1,233 1352.2,278.5 1338.1,278.2" fill="#2f8e3d"/>
<polygon points="1341.7,243.1 1356,243.1 1355.9,244.3 1341.6,244.3" fill="#2a8337"/>
<polygon points="1360.7,233 1375.4,232.8 1370.3,278.8 1355.9,278.5" fill="#2f8e3d"/>
<polygon points="1359.7,243 1374.3,243 1374.1,244.2 1359.5,244.2" fill="#2a8337"/>
<polygon points="1379.1,232.8 1394.1,232.7 1388.8,279.1 1374,278.9" fill="#2f8e3d"/>
<polygon points="1378,243 1392.9,242.9 1392.8,244.1 1377.9,244.2" fill="#2a8337"/>
<polygon points="1387.9,284.5 1394.3,228.4 1316.1,229.4 1310.8,282.8" fill="#30903f" stroke="#30903f" stroke-width="0.7"/>
<polygon points="1394.3,228.4 1394.9,229 1388.7,283.5 1387.9,284.5" fill="#2c8438" stroke="#2c8438" stroke-width="0.7"/>
<polygon points="1394.3,228.4 1394.9,229 1318.7,229.9 1316.1,229.4" fill="rgba(80,255,120,0.0)"/>
<polygon points="1387.9,284.5 1388.7,283.5 1313.5,281.9 1310.8,282.8" fill="rgba(80,255,120,0.05)"/>
<polygon points="1394,231.3 1394.4,231.7 1388.8,280.9 1388.2,281.6" fill="rgba(0,0,0,0.11)"/>
<path d="M1334.6 231.9L1333 231.9L1328 280.4L1329.6 280.4ZM1353.9 231.7L1352.2 231.7L1347 280.8L1348.7 280.8ZM1373.6 231.5L1371.9 231.5L1366.5 281.2L1368.2 281.2Z" fill="rgba(0,0,0,0)"/>
<polygon points="1318.1,232.1 1333.1,231.9 1328.2,280.4 1313.3,280.1" fill="#2f8e3d"/>
<polygon points="1317,242.7 1332,242.6 1331.9,243.9 1316.9,244" fill="#2a8337"/>
<polygon points="1337,231.9 1352.4,231.7 1347.2,280.8 1332,280.5" fill="#2f8e3d"/>
<polygon points="1335.9,242.6 1351.2,242.6 1351.1,243.9 1335.7,243.9" fill="#2a8337"/>
<polygon points="1356.3,231.7 1372.1,231.5 1366.7,281.2 1351.1,280.9" fill="#2f8e3d"/>
<polygon points="1355.2,242.5 1370.9,242.5 1370.8,243.8 1355,243.8" fill="#2a8337"/>
<polygon points="1376.2,231.5 1392.3,231.3 1386.6,281.6 1370.7,281.3" fill="#2f8e3d"/>
<polygon points="1374.9,242.5 1391.1,242.4 1390.9,243.7 1374.8,243.8" fill="#2a8337"/>
<polygon points="1385.5,287.6 1392.4,226.5 1307.6,227.7 1302,285.6" fill="#30903f" stroke="#30903f" stroke-width="0.7"/>
<polygon points="1392.4,226.5 1393.1,227.2 1386.4,286.5 1385.5,287.6" fill="#2c8438" stroke="#2c8438" stroke-width="0.7"/>
<polygon points="1392.4,226.5 1393.1,227.2 1310.7,228.3 1307.6,227.7" fill="rgba(80,255,120,0.0)"/>
<polygon points="1385.5,287.6 1386.4,286.5 1305.2,284.6 1302,285.6" fill="rgba(80,255,120,0.05)"/>
<polygon points="1392,229.6 1392.6,230.1 1386.5,283.7 1385.8,284.5" fill="rgba(0,0,0,0.11)"/>
<path d="M1327.6 230.4L1325.8 230.4L1320.5 283.1L1322.3 283.1ZM1348.5 230.2L1346.7 230.2L1341.1 283.5L1342.9 283.5ZM1369.9 229.9L1368.1 229.9L1362.2 284L1364 284Z" fill="rgba(0,0,0,0)"/>
<polygon points="1309.8,230.6 1326,230.4 1320.7,283.1 1304.7,282.7" fill="#2f8e3d"/>
<polygon points="1308.6,242.1 1324.8,242.1 1324.7,243.5 1308.5,243.5" fill="#2a8337"/>
<polygon points="1330.2,230.4 1346.9,230.2 1341.3,283.5 1324.8,283.2" fill="#2f8e3d"/>
<polygon points="1329,242 1345.6,242 1345.5,243.4 1328.9,243.4" fill="#2a8337"/>
<polygon points="1351.1,230.1 1368.3,229.9 1362.4,284 1345.5,283.6" fill="#2f8e3d"/>
<polygon points="1349.9,242 1367,241.9 1366.8,243.3 1349.7,243.4" fill="#2a8337"/>
<polygon points="1372.7,229.9 1390.2,229.7 1384.1,284.4 1366.7,284.1" fill="#2f8e3d"/>
<polygon points="1371.3,241.9 1388.9,241.8 1388.7,243.2 1371.2,243.3" fill="#2a8337"/>
<polygon points="1382.5,291.3 1390.1,224.3 1297.6,225.7 1291.5,289" fill="#30903f" stroke="#30903f" stroke-width="0.7"/>
<polygon points="1390.1,224.3 1390.9,225.1 1383.6,290 1382.5,291.3" fill="#2c8438" stroke="#2c8438" stroke-width="0.7"/>
<polygon points="1390.1,224.3 1390.9,225.1 1301.2,226.4 1297.6,225.7" fill="rgba(80,255,120,0.0)"/>
<polygon points="1382.5,291.3 1383.6,290 1295.3,287.8 1291.5,289" fill="rgba(80,255,120,0.05)"/>
<polygon points="1389.7,227.7 1390.3,228.3 1383.7,286.9 1382.9,287.9" fill="rgba(0,0,0,0.11)"/>
<path d="M1319.3 228.6L1317.4 228.7L1311.7 286.2L1313.6 286.3ZM1342 228.3L1340.1 228.4L1334 286.7L1336 286.8ZM1365.5 228L1363.4 228.1L1357.1 287.3L1359.1 287.3Z" fill="rgba(0,0,0,0)"/>
<polygon points="1299.9,228.9 1317.6,228.6 1311.9,286.2 1294.4,285.8" fill="#2f8e3d"/>
<polygon points="1298.7,241.5 1316.3,241.4 1316.1,242.9 1298.5,243" fill="#2a8337"/>
<polygon points="1322.1,228.6 1340.3,228.3 1334.2,286.8 1316.3,286.3" fill="#2f8e3d"/>
<polygon points="1320.8,241.4 1338.9,241.3 1338.8,242.8 1320.7,242.9" fill="#2a8337"/>
<polygon points="1344.9,228.3 1363.7,228 1357.3,287.3 1338.8,286.9" fill="#2f8e3d"/>
<polygon points="1343.6,241.2 1362.3,241.2 1362.1,242.7 1343.4,242.8" fill="#2a8337"/>
<polygon points="1368.5,228 1387.7,227.7 1381,287.9 1362,287.4" fill="#2f8e3d"/>
<polygon points="1367,241.1 1386.3,241 1386.1,242.6 1366.9,242.7" fill="#2a8337"/>
<polygon points="1379,295.9 1387.3,221.5 1285.4,223.3 1279,293" fill="#30903f" stroke="#30903f" stroke-width="0.7"/>
<polygon points="1387.3,221.5 1388.3,222.5 1380.3,294.2 1379,295.9" fill="#2c8438" stroke="#2c8438" stroke-width="0.7"/>
<polygon points="1387.3,221.5 1388.3,222.5 1289.8,224.1 1285.4,223.3" fill="rgba(80,255,120,0.0)"/>
<polygon points="1379,295.9 1380.3,294.2 1283.5,291.5 1279,293" fill="rgba(80,255,120,0.05)"/>
<polygon points="1386.9,225.3 1387.7,226 1380.4,290.9 1379.4,292.1" fill="rgba(0,0,0,0.11)"/>
<path d="M1309.2 226.5L1307.1 226.5L1301 290L1303 290.1ZM1334.2 226.1L1332.1 226.1L1325.5 290.7L1327.6 290.7ZM1360.1 225.7L1357.8 225.8L1350.9 291.3L1353 291.4Z" fill="rgba(0,0,0,0)"/>
<polygon points="1288,226.8 1307.3,226.5 1301.2,290 1282.1,289.5" fill="#2f8e3d"/>
<polygon points="1286.7,240.7 1306,240.6 1305.8,242.2 1286.5,242.3" fill="#2a8337"/>
<polygon points="1312.3,226.4 1332.3,226.1 1325.7,290.7 1306.1,290.2" fill="#2f8e3d"/>
<polygon points="1310.9,240.5 1330.9,240.4 1330.7,242.1 1310.8,242.2" fill="#2a8337"/>
<polygon points="1337.4,226.1 1358.1,225.8 1351.1,291.3 1330.8,290.8" fill="#2f8e3d"/>
<polygon points="1336,240.4 1356.5,240.3 1356.3,242 1335.8,242.1" fill="#2a8337"/>
<polygon points="1363.4,225.7 1384.7,225.4 1377.3,292 1356.3,291.5" fill="#2f8e3d"/>
<polygon points="1361.8,240.2 1383.1,240.1 1382.9,241.9 1361.6,242" fill="#2a8337"/>
<polygon points="1374.5,301.5 1383.8,218.1 1270.5,220.3 1263.5,297.9" fill="#30903f" stroke="#30903f" stroke-width="0.7"/>
<polygon points="1383.8,218.1 1385.1,219.4 1376.2,299.4 1374.5,301.5" fill="#2c8438" stroke="#2c8438" stroke-width="0.7"/>
<polygon points="1383.8,218.1 1385.1,219.4 1276,221.4 1270.5,220.3" fill="rgba(80,255,120,0.0)"/>
<polygon points="1374.5,301.5 1376.2,299.4 1269.2,296.1 1263.5,297.9" fill="rgba(80,255,120,0.05)"/>
<polygon points="1383.3,222.4 1384.3,223.2 1376.3,295.8 1375,297.3" fill="rgba(0,0,0,0.11)"/>
<path d="M1296.8 223.8L1294.5 223.9L1287.8 294.7L1290.1 294.8ZM1324.6 223.4L1322.2 223.4L1315 295.5L1317.4 295.6ZM1353.4 222.9L1350.9 222.9L1343.2 296.3L1345.6 296.4Z" fill="rgba(0,0,0,0)"/>
<polygon points="1273.3,224.2 1294.8,223.8 1288.1,294.7 1267,294.1" fill="#2f8e3d"/>
<polygon points="1271.9,239.7 1293.3,239.5 1293.1,241.4 1271.8,241.5" fill="#2a8337"/>
<polygon points="1300.3,223.7 1322.4,223.4 1315.2,295.5 1293.5,294.9" fill="#2f8e3d"/>
<polygon points="1298.8,239.5 1320.8,239.4 1320.7,241.3 1298.6,241.4" fill="#2a8337"/>
<polygon points="1328.2,223.3 1351.1,222.9 1343.4,296.3 1320.9,295.7" fill="#2f8e3d"/>
<polygon points="1326.5,239.3 1349.4,239.2 1349.2,241.1 1326.3,241.3" fill="#2a8337"/>
<polygon points="1357.1,222.8 1380.9,222.4 1372.6,297.2 1349.2,296.5" fill="#2f8e3d"/>
<polygon points="1355.3,239.2 1379.1,239 1378.9,241 1355.1,241.1" fill="#2a8337"/>
<polygon points="1368.9,308.7 1379.3,213.7 1251.8,216.5 1244.2,304.1" fill="#30903f" stroke="#30903f" stroke-width="0.7"/>
<polygon points="1379.3,213.7 1381,215.3 1371,306 1368.9,308.7" fill="#2c8438" stroke="#2c8438" stroke-width="0.7"/>
<polygon points="1379.3,213.7 1381,215.3 1258.7,217.9 1251.8,216.5" fill="rgba(80,255,120,0.0)"/>
<polygon points="1368.9,308.7 1371,306 1251.3,301.8 1244.2,304.1" fill="rgba(80,255,120,0.05)"/>
<polygon points="1378.8,218.6 1380.1,219.7 1371,302 1369.4,303.9" fill="rgba(0,0,0,0.11)"/>
<path d="M1281.2 220.5L1278.6 220.5L1271.3 300.6L1273.8 300.6ZM1312.4 219.9L1309.7 219.9L1301.7 301.6L1304.4 301.7ZM1344.8 219.3L1342 219.3L1333.4 302.7L1336.2 302.8Z" fill="rgba(0,0,0,0)"/>
<polygon points="1254.9,220.9 1278.8,220.5 1271.5,300.6 1248.1,299.8" fill="#2f8e3d"/>
<polygon points="1253.4,238.4 1277.2,238.3 1277,240.4 1253.2,240.5" fill="#2a8337"/>
<polygon points="1285,220.4 1309.9,219.9 1302,301.6 1277.6,300.8" fill="#2f8e3d"/>
<polygon points="1283.4,238.2 1308.2,238 1308,240.2 1283.2,240.3" fill="#2a8337"/>
<polygon points="1316.4,219.8 1342.3,219.3 1333.7,302.7 1308.3,301.8" fill="#2f8e3d"/>
<polygon points="1314.6,238 1340.4,237.8 1340.2,240 1314.4,240.2" fill="#2a8337"/>
<polygon points="1349,219.2 1376.1,218.7 1366.7,303.8 1340.2,302.9" fill="#2f8e3d"/>
<polygon points="1347.1,237.8 1374,237.6 1373.7,239.8 1346.8,240" fill="#2a8337"/>
<polygon points="1361.4,318.2 1373.4,207.9 1227.4,211.6 1219.2,312.1" fill="#30903f" stroke="#30903f" stroke-width="0.7"/>
<polygon points="1373.4,207.9 1375.7,210.1 1364.2,314.6 1361.4,318.2" fill="#2c8438" stroke="#2c8438" stroke-width="0.7"/>
<polygon points="1373.4,207.9 1375.7,210.1 1236.5,213.5 1227.4,211.6" fill="rgba(80,255,120,0.0)"/>
<polygon points="1361.4,318.2 1364.2,314.6 1228.5,309.1 1219.2,312.1" fill="rgba(80,255,120,0.05)"/>
<polygon points="1372.8,213.6 1374.6,215.1 1364.2,310 1362,312.6" fill="rgba(0,0,0,0.11)"/>
<path d="M1260.8 216.1L1257.9 216.1L1249.8 308.2L1252.7 308.3ZM1296.3 215.3L1293.2 215.4L1284.4 309.6L1287.4 309.7ZM1333.6 214.5L1330.3 214.5L1320.6 311L1323.7 311.1Z" fill="rgba(0,0,0,0)"/>
<polygon points="1231,216.7 1258.1,216.1 1250.1,308.2 1223.5,307.2" fill="#2f8e3d"/>
<polygon points="1229.3,236.8 1256.3,236.6 1256.1,239 1229.1,239.2" fill="#2a8337"/>
<polygon points="1265.1,216 1293.5,215.3 1284.7,309.6 1256.9,308.5" fill="#2f8e3d"/>
<polygon points="1263.3,236.5 1291.6,236.3 1291.3,238.8 1263.1,239" fill="#2a8337"/>
<polygon points="1300.9,215.2 1330.7,214.5 1320.9,311 1291.9,309.9" fill="#2f8e3d"/>
<polygon points="1298.9,236.2 1328.5,236 1328.2,238.5 1298.6,238.7" fill="#2a8337"/>
<polygon points="1338.4,214.3 1369.6,213.7 1358.9,312.5 1328.4,311.3" fill="#2f8e3d"/>
<polygon points="1336.2,235.9 1367.2,235.7 1367,238.3 1335.9,238.5" fill="#2a8337"/>
<polygon points="1351.1,331.3 1365.2,199.8 1194.6,205.1 1185.7,322.8" fill="#30903f" stroke="#30903f" stroke-width="0.7"/>
<polygon points="1365.2,199.8 1368.4,202.9 1355,326.3 1351.1,331.3" fill="#2c8438" stroke="#2c8438" stroke-width="0.7"/>
<polygon points="1365.2,199.8 1368.4,202.9 1207,207.5 1194.6,205.1" fill="rgba(80,255,120,0.0)"/>
<polygon points="1351.1,331.3 1355,326.3 1198.3,318.8 1185.7,322.8" fill="rgba(80,255,120,0.05)"/>
<polygon points="1364.5,206.7 1367,208.7 1354.9,321 1351.8,324.7" fill="rgba(0,0,0,0.11)"/>
<path d="M1233.1 210.1L1229.7 210.2L1220.8 318.5L1224.1 318.7ZM1274.4 209L1270.8 209.1L1260.8 320.4L1264.3 320.5ZM1318.1 207.9L1314.3 208L1303.1 322.4L1306.7 322.5Z" fill="rgba(0,0,0,0)"/>
<polygon points="1198.7,211 1230,210.2 1221.1,318.6 1190.6,317.1" fill="#2f8e3d"/>
<polygon points="1196.9,234.6 1228,234.3 1227.8,237.2 1196.7,237.5" fill="#2a8337"/>
<polygon points="1238.1,210 1271.1,209.1 1261.1,320.4 1229,318.9" fill="#2f8e3d"/>
<polygon points="1236.1,234.3 1268.9,233.9 1268.6,236.9 1235.8,237.1" fill="#2a8337"/>
<polygon points="1279.7,208.9 1314.6,207.9 1303.4,322.4 1269.5,320.8" fill="#2f8e3d"/>
<polygon points="1277.4,233.8 1312.1,233.5 1311.8,236.5 1277.2,236.8" fill="#2a8337"/>
<polygon points="1323.7,207.7 1360.7,206.7 1348.1,324.5 1312.2,322.8" fill="#2f8e3d"/>
<polygon points="1321.2,233.4 1357.9,233 1357.6,236.1 1320.9,236.4" fill="#2a8337"/>
<polygon points="1336,350.5 1353,187.8 1147.9,195.7 1138.4,337.9" fill="#30903f" stroke="#30903f" stroke-width="0.7"/>
<polygon points="1353,187.8 1357.8,192.5 1341.9,343 1336,350.5" fill="#2c8438" stroke="#2c8438" stroke-width="0.7"/>
<polygon points="1353,187.8 1357.8,192.5 1165.9,199.3 1147.9,195.7" fill="rgba(80,255,120,0.0)"/>
<polygon points="1336,350.5 1341.9,343 1156.6,332.1 1138.4,337.9" fill="rgba(80,255,120,0.05)"/>
<polygon points="1352.1,196.3 1355.9,199.5 1341.4,336.9 1336.8,342.4" fill="rgba(0,0,0,0.11)"/>
<path d="M1193.3 201.6L1189.3 201.7L1179.5 333.2L1183.4 333.4ZM1242.6 200L1238.3 200.1L1226.9 335.9L1231.1 336.2ZM1295.3 198.2L1290.7 198.4L1277.6 338.9L1282 339.2Z" fill="rgba(0,0,0,0)"/>
<polygon points="1152.7,202.9 1189.6,201.7 1179.8,333.3 1144.1,331.2" fill="#2f8e3d"/>
<polygon points="1150.8,231.6 1187.4,231.1 1187.1,234.6 1150.6,235" fill="#2a8337"/>
<polygon points="1199.2,201.3 1238.6,200 1227.3,336 1189.1,333.8" fill="#2f8e3d"/>
<polygon points="1197,231 1236.1,230.5 1235.8,234.1 1196.7,234.5" fill="#2a8337"/>
<polygon points="1248.9,199.7 1291.1,198.3 1278,339 1237.2,336.6" fill="#2f8e3d"/>
<polygon points="1246.3,230.3 1288.2,229.8 1287.8,233.6 1246,234" fill="#2a8337"/>
<polygon points="1302.2,197.9 1347.4,196.4 1332.3,342.2 1288.6,339.6" fill="#2f8e3d"/>
<polygon points="1299.1,229.7 1344.1,229.1 1343.6,233 1298.8,233.4" fill="#2a8337"/>
<polygon points="1311.5,381.6 1333,168.2 1076.2,181.3 1066.7,360.9" fill="#30903f" stroke="#30903f" stroke-width="0.7"/>
<polygon points="1333,168.2 1341.1,176.1 1321.4,369.1 1311.5,381.6" fill="#2c8438" stroke="#2c8438" stroke-width="0.7"/>
<polygon points="1333,168.2 1341.1,176.1 1104.6,187 1076.2,181.3" fill="rgba(80,255,120,0.0)"/>
<polygon points="1311.5,381.6 1321.4,369.1 1095,351.8 1066.7,360.9" fill="rgba(80,255,120,0.05)"/>
<polygon points="1331.9,179.4 1338.4,184.9 1320.3,361.9 1312.6,371" fill="rgba(0,0,0,0.11)"/>
<path d="M1131.4 188.3L1126.5 188.5L1116 355.7L1120.8 356.1ZM1192.2 185.6L1186.9 185.8L1174 360.2L1179.2 360.6ZM1258.7 182.7L1252.8 182.9L1237.1 365.2L1242.8 365.6Z" fill="rgba(0,0,0,0)"/>
<polygon points="1082,190.4 1126.8,188.4 1116.3,355.9 1073.2,352.5" fill="#2f8e3d"/>
<polygon points="1080,226.8 1124.4,226.1 1124.1,230.5 1079.8,231.1" fill="#2a8337"/>
<polygon points="1138.6,187.9 1187.3,185.7 1174.4,360.4 1127.6,356.8" fill="#2f8e3d"/>
<polygon points="1136.1,225.9 1184.4,225 1184,229.7 1135.8,230.4" fill="#2a8337"/>
<polygon points="1200.1,185.2 1253.3,182.8 1237.6,365.3 1186.7,361.4" fill="#2f8e3d"/>
<polygon points="1197.1,224.8 1249.8,223.9 1249.4,228.8 1196.7,229.5" fill="#2a8337"/>
<polygon points="1267.4,182.2 1325.8,179.6 1306.7,370.7 1251.1,366.4" fill="#2f8e3d"/>
<polygon points="1263.7,223.7 1321.5,222.7 1321,227.8 1263.3,228.6" fill="#2a8337"/>
<polygon points="1265.4,440.3 1294.2,130 952,156.5 944.7,399.9" fill="#30903f" stroke="#30903f" stroke-width="0.7"/>
<polygon points="1294.2,130 1310.9,146.5 1285.1,415.2 1265.4,440.3" fill="#2c8438" stroke="#2c8438" stroke-width="0.7"/>
<polygon points="1294.2,130 1310.9,146.5 1003.4,166.8 952,156.5" fill="rgba(80,255,120,0.0)"/>
<polygon points="1265.4,440.3 1285.1,415.2 994.8,383.9 944.7,399.9" fill="rgba(80,255,120,0.05)"/>
<polygon points="1292.6,146.6 1306.2,158 1282.4,406.7 1266.8,425.2" fill="rgba(0,0,0,0.11)"/>
<path d="M1021.6 164.7L1015.3 165.1L1005.7 394.9L1011.7 395.6ZM1100.6 159.4L1093.5 159.9L1079.8 403.5L1086.5 404.3ZM1190 153.5L1182 154L1163.2 413.2L1170.8 414Z" fill="rgba(0,0,0,0)"/>
<polygon points="959.2,168.7 1015.5,165 1005.9,395.2 952.4,388.9" fill="#2f8e3d"/>
<polygon points="957.7,218.6 1013.3,217.2 1013,223.4 957.5,224.5" fill="#2a8337"/>
<polygon points="1030.6,163.9 1093.8,159.7 1080.1,403.8 1020.2,396.8" fill="#2f8e3d"/>
<polygon points="1028.2,216.8 1090.7,215.2 1090.4,221.8 1027.9,223.1" fill="#2a8337"/>
<polygon points="1110.9,158.6 1182.6,153.8 1163.7,413.5 1096.2,405.7" fill="#2f8e3d"/>
<polygon points="1107.5,214.8 1178.3,213 1177.8,220 1107.1,221.4" fill="#2a8337"/>
<polygon points="1201.9,152.5 1283.8,147.1 1258.5,424.5 1181.9,415.6" fill="#2f8e3d"/>
<g opacity="0.22">
<use href="#txd" clip-path="url(#k0)" transform="matrix(1.0220 -0.0562 -0.0778 0.9281 1190.9 136.8)"/>
<use href="#txd" clip-path="url(#k1)" transform="matrix(1.0133 -0.0319 -0.0768 0.9160 1191.3 136.2)"/>
<use href="#txd" clip-path="url(#k2)" transform="matrix(1.0048 -0.0082 -0.0758 0.9041 1191.6 136.0)"/>
<use href="#txd" clip-path="url(#k3)" transform="matrix(0.9963 0.0148 -0.0748 0.8925 1191.9 136.4)"/>
<use href="#txd" clip-path="url(#k4)" transform="matrix(0.9881 0.0373 -0.0739 0.8811 1192.2 137.1)"/>
<use href="#txd" clip-path="url(#k5)" transform="matrix(0.9799 0.0592 -0.0729 0.8699 1192.4 138.3)"/>
<use href="#txd" clip-path="url(#k6)" transform="matrix(0.9719 0.0805 -0.0720 0.8589 1192.6 139.9)"/>
<use href="#txd" clip-path="url(#k7)" transform="matrix(0.9640 0.1013 -0.0711 0.8481 1192.8 141.8)"/>
</g>
<polygon points="1197.4,212.5 1278,210.4 1277.4,217.9 1196.8,219.6" fill="#2a8337"/>
<polygon points="1145.8,592.4 1186.4,24.1 -90.9,224.5 -79.8,291" fill="#2b8638" stroke="#2b8638" stroke-width="0.7"/>
<polygon points="1145.8,592.4 1186.4,24.1 609.2,114.6 620.9,463.4" fill="#2c8839" stroke="#2c8839" stroke-width="0.5"/>
<polygon points="1145.8,592.4 1186.4,24.1 684.3,102.9 691.7,480.8" fill="#2e893a" stroke="#2e893a" stroke-width="0.5"/>
<polygon points="1145.8,592.4 1186.4,24.1 773.7,88.8 775.1,501.3" fill="#2f8b3c" stroke="#2f8b3c" stroke-width="0.5"/>
<polygon points="1145.8,592.4 1186.4,24.1 882.1,71.8 874.6,525.8" fill="#318c3d" stroke="#318c3d" stroke-width="0.5"/>
<polygon points="1145.8,592.4 1186.4,24.1 1016.2,50.8 995.6,555.5" fill="#328e3e" stroke="#328e3e" stroke-width="0.5"/>
<polygon points="1186.4,24.1 1239.6,76.4 1203.3,519.2 1145.8,592.4" fill="#2a7a34" stroke="#2a7a34" stroke-width="0.7"/>
<polygon points="1186.4,24.1 1239.6,76.4 -42.3,225.3 -90.9,224.5" fill="rgba(80,255,120,0.0)"/>
<polygon points="1145.8,592.4 1203.3,519.2 -32.2,289.6 -79.8,291" fill="rgba(80,255,120,0.05)"/>
<polygon points="1168.4,57.4 1202.9,84.3 1169.9,523.4 1133.6,563.9" fill="rgba(0,0,0,0.06)"/>
<path d="M-41 221.2L-41.3 221.3L-29.1 299.2L-28.7 299.3ZM-36.8 220.7L-37.2 220.7L-24.8 300.2L-24.4 300.3ZM-32.5 220.1L-32.9 220.1L-20.3 301.2L-20 301.3ZM-28.1 219.5L-28.5 219.5L-15.7 302.2L-15.3 302.3ZM-23.4 218.9L-23.8 218.9L-10.9 303.3L-10.5 303.4ZM-18.6 218.2L-19 218.3L-5.8 304.5L-5.4 304.6ZM-13.5 217.5L-13.9 217.6L-0.6 305.7L-0.1 305.8ZM-8.2 216.8L-8.7 216.9L4.9 306.9L5.4 307ZM-2.7 216.1L-3.1 216.1L10.6 308.2L11.1 308.3ZM3.2 215.3L2.6 215.3L16.6 309.6L17.1 309.7ZM9.2 214.5L8.7 214.5L22.9 311L23.4 311.1ZM15.6 213.6L15.1 213.7L29.5 312.5L30 312.6ZM22.3 212.7L21.7 212.8L36.4 314.1L37 314.2ZM29.4 211.7L28.8 211.8L43.6 315.7L44.3 315.8ZM36.8 210.7L36.2 210.8L51.3 317.4L51.9 317.6ZM44.7 209.7L44 209.8L59.3 319.3L60 319.4ZM52.9 208.6L52.2 208.7L67.8 321.2L68.6 321.4ZM61.7 207.4L60.9 207.5L76.8 323.2L77.6 323.4ZM71 206.1L70.2 206.2L86.3 325.4L87.1 325.6ZM80.8 204.8L80 204.9L96.3 327.7L97.2 327.9ZM91.3 203.4L90.4 203.5L107 330.1L108 330.3ZM102.5 201.9L101.5 202L118.4 332.7L119.4 332.9ZM114.4 200.3L113.4 200.4L130.5 335.4L131.6 335.6ZM127.2 198.6L126.1 198.7L143.5 338.3L144.6 338.6ZM140.9 196.7L139.7 196.9L157.3 341.5L158.5 341.8ZM155.6 194.7L154.3 194.9L172.2 344.9L173.5 345.1ZM171.5 192.6L170.1 192.8L188.2 348.5L189.6 348.8ZM188.7 190.3L187.2 190.5L205.5 352.4L207 352.7ZM207.3 187.7L205.7 188L224.1 356.6L225.8 357ZM227.6 185L225.8 185.2L244.4 361.2L246.2 361.6ZM249.8 182L247.8 182.3L266.5 366.2L268.5 366.7ZM274.2 178.7L272 179L290.7 371.7L292.9 372.2ZM301 175.1L298.6 175.4L317.2 377.7L319.6 378.3ZM330.8 171.1L328.1 171.4L346.5 384.4L349.2 385ZM364 166.6L361 167L379 391.7L382 392.4ZM401.2 161.6L397.8 162L415.3 400L418.5 400.7ZM443.2 155.9L439.4 156.4L455.9 409.2L459.6 410ZM491 149.5L486.7 150.1L501.9 419.6L506.1 420.6ZM545.9 142.1L540.9 142.8L554.3 431.5L559.1 432.6ZM609.6 133.5L603.8 134.3L614.6 445.2L620.1 446.4ZM684.3 123.4L677.5 124.3L684.6 461L691.1 462.5ZM773.4 111.4L765.2 112.5L767 479.7L774.7 481.4ZM881.2 96.9L871.2 98.2L865.3 502L874.5 504.1ZM1014.5 78.9L1001.9 80.6L984.7 529.1L996 531.6Z" fill="rgba(0,0,0,0)"/>
<use href="#txf" clip-path="url(#k8)" transform="matrix(0.0240 -0.0021 0.0331 0.1993 -91.4 224.4)"/>
<use href="#txf" clip-path="url(#k9)" transform="matrix(0.0243 0.0002 0.0329 0.1981 -91.4 224.4)"/>
<use href="#txf" clip-path="url(#k10)" transform="matrix(0.0246 0.0024 0.0327 0.1970 -91.4 224.5)"/>
<use href="#txf" clip-path="url(#k11)" transform="matrix(0.0249 0.0046 0.0325 0.1959 -91.4 224.6)"/>
<use href="#txf" clip-path="url(#k8)" transform="matrix(0.0247 -0.0022 0.0335 0.2023 -89.0 224.0)"/>
<use href="#txf" clip-path="url(#k9)" transform="matrix(0.0250 0.0002 0.0333 0.2011 -89.0 224.0)"/>
<use href="#txf" clip-path="url(#k10)" transform="matrix(0.0253 0.0025 0.0331 0.2000 -89.0 224.1)"/>
<use href="#txf" clip-path="url(#k11)" transform="matrix(0.0257 0.0047 0.0329 0.1988 -89.0 224.2)"/>
<use href="#txf" clip-path="url(#k8)" transform="matrix(0.0255 -0.0022 0.0339 0.2054 -86.6 223.6)"/>
<use href="#txf" clip-path="url(#k9)" transform="matrix(0.0258 0.0002 0.0337 0.2042 -86.6 223.6)"/>
<use href="#txf" clip-path="url(#k10)" transform="matrix(0.0261 0.0025 0.0335 0.2030 -86.6 223.7)"/>
<use href="#txf" clip-path="url(#k11)" transform="matrix(0.0264 0.0049 0.0333 0.2018 -86.5 223.9)"/>
<use href="#txf" clip-path="url(#k8)" transform="matrix(0.0263 -0.0023 0.0343 0.2086 -84.1 223.2)"/>
<use href="#txf" clip-path="url(#k9)" transform="matrix(0.0266 0.0002 0.0341 0.2074 -84.1 223.2)"/>
<use href="#txf" clip-path="url(#k10)" transform="matrix(0.0269 0.0026 0.0339 0.2061 -84.1 223.3)"/>
<use href="#txf" clip-path="url(#k11)" transform="matrix(0.0273 0.0050 0.0337 0.2049 -84.0 223.5)"/>
<use href="#txf" clip-path="url(#k8)" transform="matrix(0.0271 -0.0024 0.0347 0.2119 -81.5 222.8)"/>
<use href="#txf" clip-path="url(#k9)" transform="matrix(0.0275 0.0002 0.0345 0.2107 -81.5 222.8)"/>
<use href="#txf" clip-path="url(#k10)" transform="matrix(0.0278 0.0027 0.0343 0.2094 -81.4 222.9)"/>
<use href="#txf" clip-path="url(#k11)" transform="matrix(0.0281 0.0052 0.0341 0.2081 -81.4 223.1)"/>
<use href="#txf" clip-path="url(#k8)" transform="matrix(0.0280 -0.0024 0.0352 0.2154 -78.8 222.4)"/>
<use href="#txf" clip-path="url(#k9)" transform="matrix(0.0284 0.0002 0.0350 0.2140 -78.8 222.4)"/>
<use href="#txf" clip-path="url(#k10)" transform="matrix(0.0287 0.0028 0.0348 0.2127 -78.8 222.5)"/>
<use href="#txf" clip-path="url(#k11)" transform="matrix(0.0290 0.0054 0.0346 0.2114 -78.7 222.6)"/>
<use href="#txf" clip-path="url(#k8)" transform="matrix(0.0289 -0.0025 0.0357 0.2189 -76.0 222.0)"/>
<use href="#txf" clip-path="url(#k9)" transform="matrix(0.0293 0.0002 0.0354 0.2175 -76.0 221.9)"/>
<use href="#txf" clip-path="url(#k10)" transform="matrix(0.0296 0.0029 0.0352 0.2162 -76.0 222.0)"/>
<use href="#txf" clip-path="url(#k11)" transform="matrix(0.0300 0.0055 0.0350 0.2148 -75.9 222.2)"/>
<use href="#txf" clip-path="url(#k8)" transform="matrix(0.0299 -0.0026 0.0361 0.2226 -73.1 221.5)"/>
<use href="#txf" clip-path="url(#k9)" transform="matrix(0.0303 0.0002 0.0359 0.2211 -73.1 221.5)"/>
<use href="#txf" clip-path="url(#k10)" transform="matrix(0.0306 0.0030 0.0357 0.2197 -73.1 221.6)"/>
<use href="#txf" clip-path="url(#k11)" transform="matrix(0.0310 0.0057 0.0354 0.2184 -73.1 221.8)"/>
<use href="#txf" clip-path="url(#k8)" transform="matrix(0.0309 -0.0027 0.0366 0.2263 -70.2 221.0)"/>
<use href="#txf" clip-path="url(#k9)" transform="matrix(0.0313 0.0002 0.0364 0.2249 -70.2 221.0)"/>
<use href="#txf" clip-path="url(#k10)" transform="matrix(0.0317 0.0031 0.0361 0.2234 -70.2 221.1)"/>
<use href="#txf" clip-path="url(#k11)" transform="matrix(0.0320 0.0059 0.0359 0.2220 -70.1 221.3)"/>
<use href="#txf" clip-path="url(#k8)" transform="matrix(0.0320 -0.0028 0.0371 0.2303 -67.1 220.5)"/>
<use href="#txf" clip-path="url(#k9)" transform="matrix(0.0324 0.0002 0.0369 0.2287 -67.1 220.5)"/>
<use href="#txf" clip-path="url(#k10)" transform="matrix(0.0328 0.0032 0.0366 0.2272 -67.1 220.6)"/>
<use href="#txf" clip-path="url(#k11)" transform="matrix(0.0331 0.0061 0.0364 0.2258 -67.0 220.8)"/>
<use href="#txf" clip-path="url(#k8)" transform="matrix(0.0331 -0.0029 0.0376 0.2343 -63.9 220.0)"/>
<use href="#txf" clip-path="url(#k9)" transform="matrix(0.0335 0.0002 0.0374 0.2327 -63.9 220.0)"/>
<use href="#txf" clip-path="url(#k10)" transform="matrix(0.0339 0.0033 0.0371 0.2312 -63.9 220.1)"/>
<use href="#txf" clip-path="url(#k11)" transform="matrix(0.0343 0.0063 0.0369 0.2296 -63.9 220.3)"/>
<use href="#txf" clip-path="url(#k8)" transform="matrix(0.0343 -0.0030 0.0381 0.2385 -60.7 219.5)"/>
<use href="#txf" clip-path="url(#k9)" transform="matrix(0.0347 0.0002 0.0379 0.2369 -60.7 219.5)"/>
<use href="#txf" clip-path="url(#k10)" transform="matrix(0.0351 0.0034 0.0376 0.2353 -60.6 219.6)"/>
<use href="#txf" clip-path="url(#k11)" transform="matrix(0.0355 0.0066 0.0374 0.2337 -60.6 219.8)"/>
<use href="#txf" clip-path="url(#k8)" transform="matrix(0.0356 -0.0031 0.0387 0.2428 -57.3 219.0)"/>
<use href="#txf" clip-path="url(#k9)" transform="matrix(0.0360 0.0002 0.0384 0.2412 -57.3 219.0)"/>
<use href="#txf" clip-path="url(#k10)" transform="matrix(0.0364 0.0035 0.0381 0.2395 -57.2 219.1)"/>
<use href="#txf" clip-path="url(#k11)" transform="matrix(0.0368 0.0068 0.0379 0.2379 -57.2 219.3)"/>
<use href="#txf" clip-path="url(#k8)" transform="matrix(0.0369 -0.0032 0.0392 0.2474 -53.7 218.4)"/>
<use href="#txf" clip-path="url(#k9)" transform="matrix(0.0374 0.0003 0.0389 0.2456 -53.7 218.4)"/>
<use href="#txf" clip-path="url(#k10)" transform="matrix(0.0378 0.0037 0.0387 0.2439 -53.7 218.5)"/>
<use href="#txf" clip-path="url(#k11)" transform="matrix(0.0382 0.0071 0.0384 0.2422 -53.7 218.8)"/>
<use href="#txf" clip-path="url(#k8)" transform="matrix(0.0383 -0.0033 0.0398 0.2520 -50.1 217.8)"/>
<use href="#txf" clip-path="url(#k9)" transform="matrix(0.0388 0.0003 0.0395 0.2502 -50.1 217.8)"/>
<use href="#txf" clip-path="url(#k10)" transform="matrix(0.0392 0.0038 0.0392 0.2484 -50.0 217.9)"/>
<use href="#txf" clip-path="url(#k11)" transform="matrix(0.0396 0.0073 0.0389 0.2467 -50.0 218.2)"/>
<use href="#txf" clip-path="url(#k8)" transform="matrix(0.0398 -0.0035 0.0403 0.2569 -46.3 217.2)"/>
<use href="#txf" clip-path="url(#k9)" transform="matrix(0.0403 0.0003 0.0401 0.2550 -46.3 217.2)"/>
<use href="#txf" clip-path="url(#k10)" transform="matrix(0.0407 0.0040 0.0398 0.2532 -46.2 217.3)"/>
<use href="#txf" clip-path="url(#k11)" transform="matrix(0.0411 0.0076 0.0395 0.2513 -46.2 217.6)"/>
<use href="#txf" clip-path="url(#k8)" transform="matrix(0.0414 -0.0036 0.0409 0.2620 -42.3 216.6)"/>
<use href="#txf" clip-path="url(#k9)" transform="matrix(0.0419 0.0003 0.0406 0.2600 -42.3 216.6)"/>
<use href="#txf" clip-path="url(#k10)" transform="matrix(0.0423 0.0041 0.0403 0.2581 -42.3 216.7)"/>
<use href="#txf" clip-path="url(#k11)" transform="matrix(0.0427 0.0079 0.0400 0.2561 -42.2 217.0)"/>
<use href="#txf" clip-path="url(#k8)" transform="matrix(0.0431 -0.0038 0.0415 0.2672 -38.2 216.0)"/>
<use href="#txf" clip-path="url(#k9)" transform="matrix(0.0435 0.0003 0.0412 0.2652 -38.2 215.9)"/>
<use href="#txf" clip-path="url(#k10)" transform="matrix(0.0440 0.0043 0.0409 0.2632 -38.2 216.1)"/>
<use href="#txf" clip-path="url(#k11)" transform="matrix(0.0444 0.0082 0.0406 0.2612 -38.1 216.4)"/>
<use href="#txf" clip-path="url(#k8)" transform="matrix(0.0448 -0.0039 0.0422 0.2727 -34.0 215.3)"/>
<use href="#txf" clip-path="url(#k9)" transform="matrix(0.0453 0.0003 0.0418 0.2706 -33.9 215.3)"/>
<use href="#txf" clip-path="url(#k10)" transform="matrix(0.0458 0.0045 0.0415 0.2685 -33.9 215.4)"/>
<use href="#txf" clip-path="url(#k11)" transform="matrix(0.0462 0.0085 0.0412 0.2664 -33.9 215.7)"/>
<use href="#txf" clip-path="url(#k8)" transform="matrix(0.0467 -0.0041 0.0428 0.2784 -29.5 214.6)"/>
<use href="#txf" clip-path="url(#k9)" transform="matrix(0.0472 0.0003 0.0425 0.2762 -29.5 214.6)"/>
<use href="#txf" clip-path="url(#k10)" transform="matrix(0.0477 0.0046 0.0421 0.2740 -29.5 214.7)"/>
<use href="#txf" clip-path="url(#k11)" transform="matrix(0.0482 0.0089 0.0418 0.2718 -29.4 215.0)"/>
<use href="#txf" clip-path="url(#k8)" transform="matrix(0.0487 -0.0043 0.0435 0.2843 -24.9 213.8)"/>
<use href="#txf" clip-path="url(#k9)" transform="matrix(0.0492 0.0003 0.0431 0.2820 -24.9 213.8)"/>
<use href="#txf" clip-path="url(#k10)" transform="matrix(0.0497 0.0048 0.0428 0.2797 -24.8 214.0)"/>
<use href="#txf" clip-path="url(#k11)" transform="matrix(0.0502 0.0093 0.0424 0.2775 -24.8 214.3)"/>
<path d="M-4.6 309.5L-5 307.1" stroke="#267933" stroke-width="1"/>
<use href="#txf" clip-path="url(#k8)" transform="matrix(0.0509 -0.0044 0.0441 0.2905 -20.0 213.1)"/>
<use href="#txf" clip-path="url(#k9)" transform="matrix(0.0514 0.0003 0.0438 0.2881 -20.0 213.0)"/>
<use href="#txf" clip-path="url(#k10)" transform="matrix(0.0519 0.0051 0.0434 0.2857 -20.0 213.2)"/>
<use href="#txf" clip-path="url(#k11)" transform="matrix(0.0524 0.0097 0.0430 0.2834 -19.9 213.5)"/>
<path d="M0.6 310.8L-5 273.5" stroke="#267933" stroke-width="1"/>
<use href="#txf" clip-path="url(#k8)" transform="matrix(0.0532 -0.0046 0.0448 0.2970 -15.0 212.3)"/>
<use href="#txf" clip-path="url(#k9)" transform="matrix(0.0537 0.0004 0.0444 0.2945 -15.0 212.2)"/>
<use href="#txf" clip-path="url(#k10)" transform="matrix(0.0542 0.0053 0.0441 0.2920 -15.0 212.4)"/>
<use href="#txf" clip-path="url(#k11)" transform="matrix(0.0547 0.0101 0.0437 0.2896 -14.9 212.8)"/>
<path d="M6.2 312.1L-5 237.9" stroke="#267933" stroke-width="1"/>
<use href="#txf" clip-path="url(#k8)" transform="matrix(0.0556 -0.0049 0.0455 0.3038 -9.7 211.4)"/>
<use href="#txf" clip-path="url(#k9)" transform="matrix(0.0562 0.0004 0.0451 0.3011 -9.7 211.4)"/>
<use href="#txf" clip-path="url(#k10)" transform="matrix(0.0567 0.0055 0.0447 0.2985 -9.7 211.6)"/>
<use href="#txf" clip-path="url(#k11)" transform="matrix(0.0572 0.0106 0.0444 0.2960 -9.6 211.9)"/>
<path d="M11.9 313.5L-3.4 210.8" stroke="#267933" stroke-width="1"/>
<use href="#txf" clip-path="url(#k8)" transform="matrix(0.0582 -0.0051 0.0463 0.3109 -4.2 210.6)"/>
<use href="#txf" clip-path="url(#k9)" transform="matrix(0.0588 0.0004 0.0458 0.3081 -4.2 210.5)"/>
<use href="#txf" clip-path="url(#k10)" transform="matrix(0.0593 0.0058 0.0454 0.3054 -4.2 210.7)"/>
<use href="#txf" clip-path="url(#k11)" transform="matrix(0.0599 0.0111 0.0450 0.3027 -4.1 211.1)"/>
<path d="M17.9 315L2.4 209.8" stroke="#267933" stroke-width="1"/>
<use href="#txf" clip-path="url(#k8)" transform="matrix(0.0610 -0.0053 0.0470 0.3183 1.6 209.6)"/>
<use href="#txf" clip-path="url(#k9)" transform="matrix(0.0616 0.0004 0.0466 0.3154 1.6 209.6)"/>
<use href="#txf" clip-path="url(#k10)" transform="matrix(0.0622 0.0060 0.0461 0.3126 1.6 209.8)"/>
<use href="#txf" clip-path="url(#k11)" transform="matrix(0.0627 0.0116 0.0457 0.3098 1.7 210.2)"/>
<path d="M24.3 316.6L8.4 208.9" stroke="#267933" stroke-width="1"/>
<use href="#txf" clip-path="url(#k8)" transform="matrix(0.0640 -0.0056 0.0478 0.3261 7.6 208.7)"/>
<use href="#txf" clip-path="url(#k9)" transform="matrix(0.0646 0.0004 0.0473 0.3231 7.6 208.6)"/>
<use href="#txf" clip-path="url(#k10)" transform="matrix(0.0652 0.0063 0.0469 0.3201 7.7 208.8)"/>
<use href="#txf" clip-path="url(#k11)" transform="matrix(0.0657 0.0121 0.0464 0.3171 7.7 209.3)"/>
<path d="M30.9 318.2L14.8 207.9" stroke="#267933" stroke-width="1"/>
<use href="#txf" clip-path="url(#k8)" transform="matrix(0.0673 -0.0059 0.0485 0.3343 14.0 207.7)"/>
<use href="#txf" clip-path="url(#k9)" transform="matrix(0.0679 0.0005 0.0481 0.3311 14.0 207.6)"/>
<use href="#txf" clip-path="url(#k10)" transform="matrix(0.0685 0.0067 0.0476 0.3280 14.0 207.8)"/>
<use href="#txf" clip-path="url(#k11)" transform="matrix(0.0690 0.0128 0.0472 0.3249 14.1 208.3)"/>
<path d="M37.8 319.9L21.5 206.8" stroke="#267933" stroke-width="1"/>
<use href="#txf" clip-path="url(#k8)" transform="matrix(0.0708 -0.0062 0.0493 0.3429 20.6 206.6)"/>
<use href="#txf" clip-path="url(#k9)" transform="matrix(0.0714 0.0005 0.0489 0.3395 20.7 206.6)"/>
<use href="#txf" clip-path="url(#k10)" transform="matrix(0.0720 0.0070 0.0484 0.3362 20.7 206.8)"/>
<use href="#txf" clip-path="url(#k11)" transform="matrix(0.0726 0.0134 0.0479 0.3330 20.8 207.2)"/>
<path d="M45.1 321.7L28.5 205.7" stroke="#267933" stroke-width="1"/>
<use href="#txf" clip-path="url(#k8)" transform="matrix(0.0745 -0.0065 0.0502 0.3519 27.7 205.5)"/>
<use href="#txf" clip-path="url(#k9)" transform="matrix(0.0752 0.0005 0.0496 0.3484 27.7 205.4)"/>
<use href="#txf" clip-path="url(#k10)" transform="matrix(0.0758 0.0074 0.0492 0.3449 27.7 205.7)"/>
<use href="#txf" clip-path="url(#k11)" transform="matrix(0.0764 0.0141 0.0487 0.3415 27.8 206.2)"/>
<path d="M52.8 323.6L36 204.6" stroke="#267933" stroke-width="1"/>
<use href="#txf" clip-path="url(#k8)" transform="matrix(0.0786 -0.0069 0.0510 0.3615 35.1 204.3)"/>
<use href="#txf" clip-path="url(#k9)" transform="matrix(0.0793 0.0005 0.0505 0.3578 35.1 204.3)"/>
<use href="#txf" clip-path="url(#k10)" transform="matrix(0.0799 0.0078 0.0499 0.3541 35.1 204.5)"/>
<use href="#txf" clip-path="url(#k11)" transform="matrix(0.0805 0.0149 0.0494 0.3505 35.2 205.0)"/>
<path d="M60.9 325.6L43.8 203.3" stroke="#267933" stroke-width="1"/>
<use href="#txf" clip-path="url(#k8)" transform="matrix(0.0831 -0.0073 0.0518 0.3716 42.9 203.1)"/>
<use href="#txf" clip-path="url(#k9)" transform="matrix(0.0837 0.0006 0.0513 0.3676 42.9 203.0)"/>
<use href="#txf" clip-path="url(#k10)" transform="matrix(0.0843 0.0082 0.0508 0.3638 42.9 203.3)"/>
<use href="#txf" clip-path="url(#k11)" transform="matrix(0.0849 0.0157 0.0502 0.3600 43.0 203.8)"/>
<path d="M69.5 327.7L52.1 202" stroke="#267933" stroke-width="1"/>
<use href="#txf" clip-path="url(#k8)" transform="matrix(0.0879 -0.0077 0.0527 0.3822 51.1 201.7)"/>
<use href="#txf" clip-path="url(#k9)" transform="matrix(0.0885 0.0006 0.0521 0.3781 51.1 201.7)"/>
<use href="#txf" clip-path="url(#k10)" transform="matrix(0.0892 0.0087 0.0516 0.3740 51.2 202.0)"/>
<use href="#txf" clip-path="url(#k11)" transform="matrix(0.0898 0.0166 0.0510 0.3700 51.3 202.5)"/>
<path d="M78.5 329.9L60.8 200.7" stroke="#267933" stroke-width="1"/>
<use href="#txf" clip-path="url(#k8)" transform="matrix(0.0931 -0.0081 0.0536 0.3935 59.8 200.4)"/>
<use href="#txf" clip-path="url(#k9)" transform="matrix(0.0938 0.0006 0.0530 0.3891 59.9 200.3)"/>
<use href="#txf" clip-path="url(#k10)" transform="matrix(0.0944 0.0092 0.0524 0.3848 59.9 200.6)"/>
<use href="#txf" clip-path="url(#k11)" transform="matrix(0.0950 0.0176 0.0518 0.3806 60.0 201.2)"/>
<path d="M88.1 332.3L70.1 199.2" stroke="#267933" stroke-width="1"/>
<use href="#txf" clip-path="url(#k8)" transform="matrix(0.0988 -0.0086 0.0545 0.4055 69.1 198.9)"/>
<use href="#txf" clip-path="url(#k9)" transform="matrix(0.0995 0.0007 0.0538 0.4008 69.1 198.8)"/>
<use href="#txf" clip-path="url(#k10)" transform="matrix(0.1002 0.0097 0.0532 0.3963 69.2 199.1)"/>
<use href="#txf" clip-path="url(#k11)" transform="matrix(0.1008 0.0186 0.0526 0.3917 69.3 199.8)"/>
<path d="M98.2 334.8L79.9 197.7" stroke="#267933" stroke-width="1"/>
<use href="#txf" clip-path="url(#k8)" transform="matrix(0.1051 -0.0092 0.0554 0.4182 78.9 197.3)"/>
<use href="#txf" clip-path="url(#k9)" transform="matrix(0.1058 0.0007 0.0547 0.4133 78.9 197.3)"/>
<use href="#txf" clip-path="url(#k10)" transform="matrix(0.1064 0.0103 0.0541 0.4084 79.0 197.6)"/>
<use href="#txf" clip-path="url(#k11)" transform="matrix(0.1071 0.0198 0.0534 0.4036 79.1 198.3)"/>
<path d="M109 337.4L90.4 196" stroke="#267933" stroke-width="1"/>
<polygon points="91.7,203.2 100.6,202 117.6,332.7 108.4,330.7" fill="#206d2c"/>
<polygon points="91.9,203.1 100.4,202 101,205.9 92.4,206.9" fill="#247430"/>
<polygon points="92.3,206.9 101,205.8 101.5,209.8 92.8,210.7" fill="#18531f"/>
<polygon points="93,210.8 99.6,209.9 100.1,208.5 101.2,208.4 101.6,211.6 93.2,212.5" fill="#3dc355"/>
<polygon points="93.2,212.6 101.6,211.7 102,214.6 93.6,215.5" fill="#1f6c2c"/>
<polygon points="93.6,215.6 102,214.8 102.4,217.7 94,218.4" fill="#2b8e3f"/>
<polygon points="93.9,218.5 102.5,217.8 103.3,224.3 94.7,224.9" fill="#247430"/>
<polygon points="94.7,224.8 103.4,224.2 103.6,225.7 94.9,226.3" fill="#18531f"/>
<polygon points="95,226.3 101.7,225.7 102.2,224.4 103.2,224.3 103.6,227.3 95.2,227.8" fill="#3dc355"/>
<polygon points="95.1,227.9 103.7,227.4 104.1,230.5 95.5,230.9" fill="#247430"/>
<polygon points="95.5,231.2 104.2,230.7 104.6,233.6 95.9,234" fill="#2c8f3f"/>
<polygon points="96,234.2 104.5,233.8 117.3,332.3 108.6,330.3" fill="#247430"/>
<use href="#txd" clip-path="url(#k8)" transform="matrix(0.1120 -0.0098 0.0563 0.4318 89.4 195.7)"/>
<use href="#txd" clip-path="url(#k9)" transform="matrix(0.1127 0.0007 0.0556 0.4265 89.4 195.6)"/>
<use href="#txd" clip-path="url(#k10)" transform="matrix(0.1133 0.0110 0.0549 0.4213 89.5 195.9)"/>
<use href="#txd" clip-path="url(#k11)" transform="matrix(0.1139 0.0210 0.0542 0.4162 89.6 196.7)"/>
<path d="M120.4 340.2L101.6 194.3" stroke="#267933" stroke-width="1"/>
<polygon points="103,201.6 112.5,200.4 129.7,335.5 119.9,333.3" fill="#206d2c"/>
<polygon points="103.1,201.6 112.3,200.4 112.8,204.4 103.6,205.5" fill="#247430"/>
<polygon points="103.6,205.5 112.9,204.4 113.4,208.4 104.1,209.5" fill="#18531f"/>
<polygon points="104.3,209.6 111.4,208.6 111.9,207.1 113,207 113.4,210.3 104.5,211.3" fill="#3dc355"/>
<polygon points="104.5,211.3 113.4,210.4 113.8,213.5 104.9,214.4" fill="#1f6c2c"/>
<polygon points="104.9,214.5 113.8,213.6 114.2,216.6 105.3,217.4" fill="#2b8e3f"/>
<polygon points="105.2,217.5 114.4,216.7 115.2,223.5 106,224.1" fill="#247430"/>
<polygon points="106,224 115.3,223.3 115.5,224.9 106.2,225.5" fill="#18531f"/>
<polygon points="106.3,225.6 113.4,224.9 114,223.6 115.1,223.5 115.5,226.6 106.5,227.1" fill="#3dc355"/>
<polygon points="106.4,227.2 115.6,226.6 116,229.8 106.8,230.3" fill="#247430"/>
<polygon points="106.8,230.6 116.1,230.1 116.5,233.1 107.2,233.5" fill="#2c8f3f"/>
<polygon points="107.3,233.7 116.4,233.3 129.4,335 120.1,332.9" fill="#247430"/>
<use href="#txd" clip-path="url(#k8)" transform="matrix(0.1196 -0.0104 0.0572 0.4463 100.5 193.9)"/>
<use href="#txd" clip-path="url(#k9)" transform="matrix(0.1202 0.0008 0.0565 0.4406 100.5 193.8)"/>
<use href="#txd" clip-path="url(#k10)" transform="matrix(0.1209 0.0118 0.0557 0.4351 100.6 194.2)"/>
<use href="#txd" clip-path="url(#k11)" transform="matrix(0.1215 0.0224 0.0551 0.4297 100.7 195.0)"/>
<path d="M132.6 343.2L113.5 192.4" stroke="#267933" stroke-width="1"/>
<polygon points="115,200 125.1,198.6 142.6,338.4 132.2,336.1" fill="#206d2c"/>
<polygon points="115.1,200 124.9,198.7 125.5,202.8 115.7,204" fill="#247430"/>
<polygon points="115.6,204 125.5,202.8 126,207 116.1,208.1" fill="#18531f"/>
<polygon points="116.3,208.2 123.9,207.2 124.5,205.6 125.7,205.5 126.1,208.9 116.5,210" fill="#3dc355"/>
<polygon points="116.5,210.1 126.1,209 126.5,212.2 116.9,213.2" fill="#1f6c2c"/>
<polygon points="117,213.3 126.5,212.4 126.9,215.4 117.3,216.3" fill="#2b8e3f"/>
<polygon points="117.2,216.5 127.1,215.6 127.9,222.6 118.1,223.3" fill="#247430"/>
<polygon points="118,223.2 128,222.4 128.2,224.1 118.2,224.7" fill="#18531f"/>
<polygon points="118.4,224.8 126,224.1 126.6,222.7 127.8,222.6 128.2,225.8 118.6,226.4" fill="#3dc355"/>
<polygon points="118.5,226.5 128.3,225.9 128.7,229.2 118.9,229.7" fill="#247430"/>
<polygon points="118.9,230 128.8,229.4 129.2,232.5 119.3,233" fill="#2c8f3f"/>
<polygon points="119.4,233.2 129.1,232.7 142.3,337.9 132.4,335.7" fill="#247430"/>
<use href="#txd" clip-path="url(#k8)" transform="matrix(0.1279 -0.0112 0.0581 0.4617 112.4 192.0)"/>
<use href="#txd" clip-path="url(#k9)" transform="matrix(0.1286 0.0008 0.0573 0.4557 112.4 191.9)"/>
<use href="#txd" clip-path="url(#k10)" transform="matrix(0.1292 0.0126 0.0566 0.4498 112.5 192.3)"/>
<use href="#txd" clip-path="url(#k11)" transform="matrix(0.1299 0.0240 0.0558 0.4440 112.6 193.1)"/>
<path d="M145.6 346.4L126.2 190.4" stroke="#267933" stroke-width="1"/>
<polygon points="127.8,198.3 138.7,196.8 156.4,341.6 145.3,339.1" fill="#206d2c"/>
<polygon points="128,198.3 138.5,196.8 139,201.1 128.5,202.4" fill="#247430"/>
<polygon points="128.5,202.4 139.1,201.1 139.6,205.5 129,206.7" fill="#18531f"/>
<polygon points="129.2,206.8 137.3,205.6 138,204.1 139.2,203.9 139.7,207.5 129.4,208.6" fill="#3dc355"/>
<polygon points="129.4,208.7 139.7,207.6 140.1,210.9 129.8,211.9" fill="#1f6c2c"/>
<polygon points="129.9,212.1 140.1,211.1 140.5,214.2 130.2,215.1" fill="#2b8e3f"/>
<polygon points="130.1,215.3 140.7,214.4 141.6,221.6 131,222.4" fill="#247430"/>
<polygon points="130.9,222.2 141.6,221.5 141.8,223.2 131.1,223.9" fill="#18531f"/>
<polygon points="131.3,223.9 139.5,223.2 140.1,221.7 141.4,221.6 141.8,224.9 131.5,225.6" fill="#3dc355"/>
<polygon points="131.4,225.7 142,225 142.4,228.4 131.8,229" fill="#247430"/>
<polygon points="131.8,229.3 142.5,228.7 142.9,231.9 132.2,232.4" fill="#2c8f3f"/>
<polygon points="132.3,232.6 142.8,232.1 156.1,341.1 145.5,338.7" fill="#247430"/>
<use href="#txd" clip-path="url(#k8)" transform="matrix(0.1372 -0.0120 0.0590 0.4783 125.1 189.9)"/>
<use href="#txd" clip-path="url(#k9)" transform="matrix(0.1379 0.0009 0.0582 0.4718 125.1 189.9)"/>
<use href="#txd" clip-path="url(#k10)" transform="matrix(0.1385 0.0135 0.0574 0.4655 125.2 190.3)"/>
<use href="#txd" clip-path="url(#k11)" transform="matrix(0.1391 0.0257 0.0566 0.4593 125.4 191.2)"/>
<path d="M159.6 349.9L139.9 188.3" stroke="#267933" stroke-width="1"/>
<polygon points="141.6,196.4 153.4,194.8 171.3,345 159.3,342.3" fill="#206d2c"/>
<polygon points="141.8,196.4 153.1,194.9 153.7,199.3 142.3,200.7" fill="#247430"/>
<polygon points="142.3,200.7 153.7,199.3 154.3,203.8 142.8,205.1" fill="#18531f"/>
<polygon points="143,205.2 151.8,204 152.5,202.4 153.8,202.2 154.3,205.9 143.3,207.1" fill="#3dc355"/>
<polygon points="143.3,207.2 154.3,206 154.7,209.4 143.7,210.5" fill="#1f6c2c"/>
<polygon points="143.7,210.7 154.7,209.6 155.1,212.9 144.1,213.9" fill="#2b8e3f"/>
<polygon points="144,214.1 155.3,213 156.2,220.6 144.9,221.4" fill="#247430"/>
<polygon points="144.8,221.2 156.3,220.4 156.5,222.2 145,223" fill="#18531f"/>
<polygon points="145.2,223 154,222.2 154.7,220.7 156,220.6 156.5,224 145.4,224.7" fill="#3dc355"/>
<polygon points="145.3,224.8 156.6,224.1 157,227.7 145.7,228.3" fill="#247430"/>
<polygon points="145.7,228.6 157.2,227.9 157.5,231.3 146,231.8" fill="#2c8f3f"/>
<polygon points="146.2,232 157.4,231.5 170.9,344.4 159.6,341.9" fill="#247430"/>
<use href="#txd" clip-path="url(#k8)" transform="matrix(0.1476 -0.0129 0.0598 0.4961 138.7 187.8)"/>
<use href="#txd" clip-path="url(#k9)" transform="matrix(0.1482 0.0010 0.0590 0.4892 138.8 187.7)"/>
<use href="#txd" clip-path="url(#k10)" transform="matrix(0.1488 0.0145 0.0582 0.4824 138.9 188.1)"/>
<use href="#txd" clip-path="url(#k11)" transform="matrix(0.1494 0.0276 0.0573 0.4757 139.1 189.1)"/>
<path d="M174.6 353.5L154.6 186" stroke="#267933" stroke-width="1"/>
<polygon points="156.4,194.4 169.1,192.7 187.3,348.6 174.4,345.7" fill="#206d2c"/>
<polygon points="156.7,194.4 168.9,192.7 169.4,197.4 157.2,198.9" fill="#247430"/>
<polygon points="157.1,198.9 169.5,197.3 170,202 157.7,203.4" fill="#18531f"/>
<polygon points="157.9,203.6 167.3,202.3 168.1,200.5 169.6,200.4 170,204.2 158.1,205.5" fill="#3dc355"/>
<polygon points="158.2,205.6 170.1,204.3 170.5,207.9 158.6,209" fill="#1f6c2c"/>
<polygon points="158.6,209.3 170.5,208.1 170.9,211.5 159,212.6" fill="#2b8e3f"/>
<polygon points="158.9,212.7 171.1,211.6 172,219.5 159.8,220.3" fill="#247430"/>
<polygon points="159.7,220.2 172,219.3 172.3,221.1 159.9,222" fill="#18531f"/>
<polygon points="160.1,222 169.6,221.1 170.4,219.6 171.8,219.5 172.2,223 160.3,223.8" fill="#3dc355"/>
<polygon points="160.2,223.9 172.4,223.1 172.8,226.8 160.6,227.5" fill="#247430"/>
<polygon points="160.6,227.8 173,227.1 173.4,230.5 161,231.1" fill="#2c8f3f"/>
<polygon points="161.1,231.3 173.2,230.8 186.9,348 174.7,345.3" fill="#247430"/>
<use href="#txd" clip-path="url(#k8)" transform="matrix(0.1591 -0.0139 0.0606 0.5153 153.4 185.4)"/>
<use href="#txd" clip-path="url(#k9)" transform="matrix(0.1597 0.0010 0.0597 0.5078 153.5 185.3)"/>
<use href="#txd" clip-path="url(#k10)" transform="matrix(0.1603 0.0156 0.0589 0.5005 153.6 185.8)"/>
<use href="#txd" clip-path="url(#k11)" transform="matrix(0.1608 0.0297 0.0580 0.4933 153.8 186.8)"/>
<path d="M190.7 357.5L170.5 183.5" stroke="#267933" stroke-width="1"/>
<polygon points="172.5,192.2 186.2,190.4 204.5,352.5 190.7,349.4" fill="#206d2c"/>
<polygon points="172.7,192.2 185.9,190.4 186.4,195.2 173.2,196.9" fill="#247430"/>
<polygon points="173.2,196.9 186.5,195.2 187.1,200.1 173.7,201.6" fill="#18531f"/>
<polygon points="174,201.7 184.2,200.4 185,198.6 186.6,198.4 187.1,202.4 174.2,203.8" fill="#3dc355"/>
<polygon points="174.2,203.9 187.1,202.5 187.5,206.2 174.6,207.5" fill="#1f6c2c"/>
<polygon points="174.7,207.7 187.5,206.4 187.9,210 175.1,211.1" fill="#2b8e3f"/>
<polygon points="174.9,211.3 188.1,210.1 189.1,218.3 175.8,219.2" fill="#247430"/>
<polygon points="175.7,219 189.1,218.1 189.3,220 175.9,220.9" fill="#18531f"/>
<polygon points="176.2,220.9 186.4,220 187.3,218.4 188.9,218.3 189.3,222 176.4,222.8" fill="#3dc355"/>
<polygon points="176.3,222.9 189.5,222.1 189.9,225.9 176.7,226.6" fill="#247430"/>
<polygon points="176.6,226.9 190,226.2 190.4,229.8 177,230.4" fill="#2c8f3f"/>
<polygon points="177.2,230.6 190.3,230.1 204.1,351.9 190.9,348.9" fill="#247430"/>
<use href="#txd" clip-path="url(#k8)" transform="matrix(0.1721 -0.0150 0.0614 0.5361 169.3 182.9)"/>
<use href="#txd" clip-path="url(#k9)" transform="matrix(0.1727 0.0011 0.0605 0.5280 169.3 182.8)"/>
<use href="#txd" clip-path="url(#k10)" transform="matrix(0.1731 0.0168 0.0595 0.5200 169.5 183.3)"/>
<use href="#txd" clip-path="url(#k11)" transform="matrix(0.1736 0.0320 0.0587 0.5123 169.6 184.4)"/>
<path d="M208.1 361.8L187.7 180.8" stroke="#267933" stroke-width="1"/>
<polygon points="189.8,189.9 204.7,187.9 223.2,356.8 208.2,353.4" fill="#206d2c"/>
<polygon points="190,189.9 204.4,187.9 204.9,192.9 190.6,194.7" fill="#247430"/>
<polygon points="190.5,194.7 205,192.9 205.6,198 191.1,199.7" fill="#18531f"/>
<polygon points="191.3,199.8 202.4,198.3 203.4,196.4 205.1,196.2 205.5,200.4 191.6,201.9" fill="#3dc355"/>
<polygon points="191.6,202 205.6,200.5 206,204.4 192,205.7" fill="#1f6c2c"/>
<polygon points="192,206 206,204.6 206.4,208.3 192.4,209.5" fill="#2b8e3f"/>
<polygon points="192.3,209.7 206.6,208.4 207.6,216.9 193.2,218" fill="#247430"/>
<polygon points="193.1,217.8 207.6,216.8 207.9,218.7 193.3,219.7" fill="#18531f"/>
<polygon points="193.6,219.7 204.7,218.8 205.6,217.1 207.4,217 207.8,220.8 193.8,221.7" fill="#3dc355"/>
<polygon points="193.6,221.8 208,220.9 208.4,224.9 194.1,225.7" fill="#247430"/>
<polygon points="194,226 208.6,225.2 209,229 194.4,229.6" fill="#2c8f3f"/>
<polygon points="194.6,229.9 208.8,229.3 222.7,356.2 208.5,352.9" fill="#247430"/>
<use href="#txd" clip-path="url(#k8)" transform="matrix(0.1868 -0.0163 0.0621 0.5586 186.4 180.1)"/>
<use href="#txd" clip-path="url(#k9)" transform="matrix(0.1872 0.0012 0.0611 0.5498 186.5 180.0)"/>
<use href="#txd" clip-path="url(#k10)" transform="matrix(0.1876 0.0182 0.0601 0.5412 186.6 180.6)"/>
<use href="#txd" clip-path="url(#k11)" transform="matrix(0.1880 0.0347 0.0592 0.5328 186.8 181.8)"/>
<path d="M226.9 366.4L206.3 177.8" stroke="#267933" stroke-width="1"/>
<polygon points="208.6,187.3 224.8,185.2 243.5,361.4 227.2,357.7" fill="#206d2c"/>
<polygon points="208.9,187.3 224.5,185.2 225,190.5 209.4,192.4" fill="#247430"/>
<polygon points="209.3,192.4 225.1,190.4 225.7,195.7 209.9,197.5" fill="#18531f"/>
<polygon points="210.2,197.7 222.3,196.1 223.3,194.1 225.2,193.9 225.7,198.2 210.5,199.9" fill="#3dc355"/>
<polygon points="210.5,200 225.7,198.3 226.1,202.4 210.9,203.9" fill="#1f6c2c"/>
<polygon points="210.9,204.1 226.1,202.6 226.5,206.5 211.3,207.8" fill="#2b8e3f"/>
<polygon points="211.1,208 226.8,206.6 227.7,215.5 212.1,216.6" fill="#247430"/>
<polygon points="212,216.5 227.8,215.3 228,217.4 212.2,218.5" fill="#18531f"/>
<polygon points="212.5,218.5 224.5,217.4 225.6,215.7 227.5,215.5 227.9,219.5 212.7,220.5" fill="#3dc355"/>
<polygon points="212.5,220.6 228.1,219.6 228.6,223.8 213,224.7" fill="#247430"/>
<polygon points="212.9,225 228.7,224.2 229.1,228.1 213.3,228.8" fill="#2c8f3f"/>
<polygon points="213.5,229 229,228.4 243,360.7 227.5,357.2" fill="#247430"/>
<use href="#txd" clip-path="url(#k8)" transform="matrix(0.2033 -0.0178 0.0626 0.5830 205.0 177.2)"/>
<use href="#txd" clip-path="url(#k9)" transform="matrix(0.2037 0.0013 0.0616 0.5734 205.1 177.0)"/>
<use href="#txd" clip-path="url(#k10)" transform="matrix(0.2040 0.0198 0.0606 0.5641 205.2 177.7)"/>
<use href="#txd" clip-path="url(#k11)" transform="matrix(0.2043 0.0377 0.0596 0.5550 205.5 179.0)"/>
<path d="M247.3 371.5L226.6 174.7" stroke="#267933" stroke-width="1"/>
<polygon points="229.1,184.6 246.8,182.2 265.6,366.4 247.8,362.4" fill="#206d2c"/>
<polygon points="229.4,184.5 246.5,182.2 247,187.7 230,189.8" fill="#247430"/>
<polygon points="229.9,189.9 247.1,187.7 247.7,193.3 230.4,195.2" fill="#18531f"/>
<polygon points="230.8,195.4 243.9,193.6 245.1,191.5 247.2,191.3 247.6,195.9 231,197.6" fill="#3dc355"/>
<polygon points="231,197.8 247.6,196 248.1,200.2 231.4,201.9" fill="#1f6c2c"/>
<polygon points="231.5,202.1 248.1,200.5 248.5,204.5 231.9,206" fill="#2b8e3f"/>
<polygon points="231.7,206.2 248.7,204.7 249.7,214 232.6,215.2" fill="#247430"/>
<polygon points="232.5,215 249.8,213.8 250,215.9 232.7,217.1" fill="#18531f"/>
<polygon points="233,217.1 246.2,216 247.4,214.1 249.5,214 249.9,218.2 233.3,219.2" fill="#3dc355"/>
<polygon points="233.1,219.3 250.1,218.3 250.6,222.7 233.5,223.6" fill="#247430"/>
<polygon points="233.4,223.9 250.7,223 251.1,227.1 233.9,227.9" fill="#2c8f3f"/>
<polygon points="234.1,228.1 251,227.4 265,365.7 248.1,361.9" fill="#247430"/>
<use href="#txd" clip-path="url(#k8)" transform="matrix(0.2222 -0.0194 0.0630 0.6097 225.3 173.9)"/>
<use href="#txd" clip-path="url(#k9)" transform="matrix(0.2224 0.0014 0.0620 0.5992 225.4 173.8)"/>
<use href="#txd" clip-path="url(#k10)" transform="matrix(0.2226 0.0216 0.0609 0.5890 225.5 174.5)"/>
<use href="#txd" clip-path="url(#k11)" transform="matrix(0.2228 0.0411 0.0599 0.5791 225.8 175.9)"/>
<path d="M269.6 376.9L248.8 171.2" stroke="#267933" stroke-width="1"/>
<polygon points="251.5,181.5 271,178.9 289.7,371.9 270.3,367.5" fill="#206d2c"/>
<polygon points="251.9,181.5 270.6,179 271.1,184.7 252.4,187.1" fill="#247430"/>
<polygon points="252.3,187.1 271.3,184.7 271.8,190.5 252.9,192.7" fill="#18531f"/>
<polygon points="253.2,192.8 267.7,190.9 269,188.8 271.3,188.5 271.7,193.3 253.5,195.2" fill="#3dc355"/>
<polygon points="253.5,195.4 271.7,193.4 272.2,197.8 253.9,199.6" fill="#1f6c2c"/>
<polygon points="254,199.9 272.2,198.1 272.6,202.3 254.4,204" fill="#2b8e3f"/>
<polygon points="254.1,204.2 272.9,202.5 273.8,212.2 255.1,213.6" fill="#247430"/>
<polygon points="255,213.4 273.9,212 274.1,214.3 255.2,215.6" fill="#18531f"/>
<polygon points="255.5,215.6 270,214.4 271.3,212.4 273.6,212.3 274,216.7 255.8,217.8" fill="#3dc355"/>
<polygon points="255.5,217.9 274.3,216.8 274.7,221.4 256,222.4" fill="#247430"/>
<polygon points="255.9,222.8 274.9,221.8 275.3,226 256.3,226.9" fill="#2c8f3f"/>
<polygon points="256.6,227.2 275.1,226.4 289.2,371.2 270.7,367" fill="#247430"/>
<use href="#txd" clip-path="url(#k8)" transform="matrix(0.2439 -0.0213 0.0632 0.6390 247.4 170.3)"/>
<use href="#txd" clip-path="url(#k9)" transform="matrix(0.2439 0.0016 0.0621 0.6275 247.5 170.2)"/>
<use href="#txd" clip-path="url(#k10)" transform="matrix(0.2439 0.0237 0.0610 0.6163 247.7 171.0)"/>
<use href="#txd" clip-path="url(#k11)" transform="matrix(0.2439 0.0450 0.0599 0.6054 248.0 172.5)"/>
<path d="M294 382.9L273.2 167.4" stroke="#267933" stroke-width="1"/>
<polygon points="276.1,178.2 297.6,175.3 316.3,377.9 294.9,373.1" fill="#206d2c"/>
<polygon points="276.5,178.2 297.2,175.4 297.7,181.4 277.1,184" fill="#247430"/>
<polygon points="277,184 297.9,181.4 298.4,187.5 277.5,189.9" fill="#18531f"/>
<polygon points="277.9,190.1 293.9,188 295.3,185.7 297.8,185.4 298.3,190.4 278.2,192.6" fill="#3dc355"/>
<polygon points="278.2,192.7 298.3,190.5 298.7,195.2 278.6,197.2" fill="#1f6c2c"/>
<polygon points="278.6,197.5 298.7,195.5 299.2,199.9 279,201.7" fill="#2b8e3f"/>
<polygon points="278.8,202 299.5,200.1 300.4,210.4 279.8,211.8" fill="#247430"/>
<polygon points="279.6,211.6 300.5,210.1 300.7,212.5 279.8,213.9" fill="#18531f"/>
<polygon points="280.2,213.9 296.2,212.6 297.6,210.6 300.1,210.4 300.5,215 280.4,216.3" fill="#3dc355"/>
<polygon points="280.2,216.4 300.8,215.1 301.3,220 280.6,221.1" fill="#247430"/>
<polygon points="280.6,221.5 301.5,220.4 301.9,224.8 281,225.8" fill="#2c8f3f"/>
<polygon points="281.3,226.1 301.6,225.2 315.6,377.2 295.3,372.6" fill="#247430"/>
<use href="#txd" clip-path="url(#k8)" transform="matrix(0.2688 -0.0235 0.0632 0.6712 271.7 166.4)"/>
<use href="#txd" clip-path="url(#k9)" transform="matrix(0.2686 0.0017 0.0620 0.6585 271.9 166.3)"/>
<use href="#txd" clip-path="url(#k10)" transform="matrix(0.2684 0.0261 0.0608 0.6462 272.1 167.1)"/>
<use href="#txd" clip-path="url(#k11)" transform="matrix(0.2681 0.0495 0.0597 0.6342 272.4 168.8)"/>
<path d="M320.8 389.5L300 163.1" stroke="#267933" stroke-width="1"/>
<polygon points="303.3,174.5 327.1,171.3 345.6,384.6 321.9,379.2" fill="#206d2c"/>
<polygon points="303.7,174.5 326.6,171.4 327.2,177.8 304.3,180.6" fill="#247430"/>
<polygon points="304.1,180.6 327.3,177.8 327.9,184.2 304.7,186.8" fill="#18531f"/>
<polygon points="305.2,187 322.8,184.7 324.5,182.3 327.2,182 327.7,187.2 305.4,189.6" fill="#3dc355"/>
<polygon points="305.4,189.8 327.7,187.4 328.1,192.3 305.8,194.5" fill="#1f6c2c"/>
<polygon points="305.9,194.8 328.2,192.6 328.6,197.3 306.3,199.3" fill="#2b8e3f"/>
<polygon points="306,199.5 328.9,197.5 329.8,208.3 307,209.9" fill="#247430"/>
<polygon points="306.8,209.7 330,208 330.2,210.6 307,212.1" fill="#18531f"/>
<polygon points="307.4,212.1 325.1,210.7 326.7,208.5 329.5,208.3 329.9,213.2 307.7,214.6" fill="#3dc355"/>
<polygon points="307.4,214.7 330.3,213.3 330.7,218.4 307.8,219.6" fill="#247430"/>
<polygon points="307.7,220 330.9,218.8 331.3,223.5 308.1,224.6" fill="#2c8f3f"/>
<polygon points="308.5,224.9 331,223.9 344.9,383.8 322.5,378.7" fill="#247430"/>
<use href="#txd" clip-path="url(#k12)" transform="matrix(0.2979 -0.0308 0.0630 0.7092 298.6 162.3)"/>
<use href="#txd" clip-path="url(#k13)" transform="matrix(0.2976 -0.0119 0.0621 0.6997 298.6 162.0)"/>
<use href="#txd" clip-path="url(#k14)" transform="matrix(0.2972 0.0065 0.0613 0.6905 298.8 162.1)"/>
<use href="#txd" clip-path="url(#k15)" transform="matrix(0.2969 0.0245 0.0605 0.6814 298.9 162.7)"/>
<use href="#txd" clip-path="url(#k16)" transform="matrix(0.2965 0.0419 0.0597 0.6725 299.1 163.8)"/>
<use href="#txd" clip-path="url(#k17)" transform="matrix(0.2961 0.0589 0.0589 0.6638 299.3 165.3)"/>
<path d="M350.3 396.8L329.8 158.5" stroke="#267933" stroke-width="1"/>
<polygon points="333.4,170.4 360,166.9 378.1,392 351.8,386" fill="#206d2c"/>
<polygon points="333.9,170.4 359.4,166.9 360,173.7 334.5,176.9" fill="#247430"/>
<polygon points="334.3,176.9 360.2,173.7 360.7,180.5 334.9,183.4" fill="#18531f"/>
<polygon points="335.4,183.6 355,181.1 356.9,178.5 360,178.1 360.4,183.7 335.6,186.4" fill="#3dc355"/>
<polygon points="335.6,186.5 360.4,183.9 360.9,189.1 336,191.5" fill="#1f6c2c"/>
<polygon points="336.1,191.8 360.9,189.4 361.3,194.3 336.5,196.6" fill="#2b8e3f"/>
<polygon points="336.2,196.8 361.7,194.5 362.6,206 337.1,207.8" fill="#247430"/>
<polygon points="336.9,207.6 362.7,205.7 362.9,208.4 337.1,210.1" fill="#18531f"/>
<polygon points="337.6,210.1 357.3,208.5 359.1,206.2 362.2,206 362.6,211.1 337.8,212.7" fill="#3dc355"/>
<polygon points="337.5,212.9 363,211.3 363.4,216.6 338,218" fill="#247430"/>
<polygon points="337.9,218.4 363.6,217.1 364,222.1 338.3,223.2" fill="#2c8f3f"/>
<polygon points="338.6,223.6 363.7,222.5 377.3,391.1 352.4,385.5" fill="#247430"/>
<use href="#txd" clip-path="url(#k12)" transform="matrix(0.3320 -0.0343 0.0620 0.7491 328.3 157.6)"/>
<use href="#txd" clip-path="url(#k13)" transform="matrix(0.3313 -0.0132 0.0612 0.7386 328.4 157.2)"/>
<use href="#txd" clip-path="url(#k14)" transform="matrix(0.3307 0.0073 0.0603 0.7282 328.5 157.3)"/>
<use href="#txd" clip-path="url(#k15)" transform="matrix(0.3301 0.0272 0.0595 0.7181 328.7 158.0)"/>
<use href="#txd" clip-path="url(#k16)" transform="matrix(0.3294 0.0466 0.0587 0.7083 328.9 159.2)"/>
<use href="#txd" clip-path="url(#k17)" transform="matrix(0.3287 0.0654 0.0579 0.6986 329.2 160.8)"/>
<path d="M383.1 404.8L363 153.3" stroke="#267933" stroke-width="1"/>
<polygon points="367.1,165.9 396.8,161.9 414.3,400.3 385.1,393.6" fill="#206d2c"/>
<polygon points="367.6,165.8 396.2,162 396.7,169.1 368.1,172.7" fill="#247430"/>
<polygon points="368,172.7 396.9,169.1 397.5,176.4 368.5,179.6" fill="#18531f"/>
<polygon points="369,179.8 391.1,177 393.2,174.2 396.7,173.8 397.1,179.8 369.3,182.8" fill="#3dc355"/>
<polygon points="369.3,182.9 397.1,179.9 397.5,185.4 369.7,188.2" fill="#1f6c2c"/>
<polygon points="369.7,188.5 397.6,185.8 398,191 370.1,193.5" fill="#2b8e3f"/>
<polygon points="369.8,193.8 398.4,191.2 399.3,203.4 370.7,205.4" fill="#247430"/>
<polygon points="370.5,205.2 399.4,203.1 399.6,205.9 370.7,207.9" fill="#18531f"/>
<polygon points="371.3,207.9 393.3,206.1 395.4,203.6 398.9,203.4 399.3,208.9 371.5,210.6" fill="#3dc355"/>
<polygon points="371.1,210.8 399.7,209 400.1,214.7 371.6,216.2" fill="#247430"/>
<polygon points="371.4,216.7 400.3,215.2 400.7,220.5 371.8,221.7" fill="#2c8f3f"/>
<polygon points="372.2,222.1 400.3,220.9 413.5,399.3 385.7,393" fill="#247430"/>
<use href="#txd" clip-path="url(#k12)" transform="matrix(0.3722 -0.0384 0.0605 0.7937 361.5 152.2)"/>
<use href="#txd" clip-path="url(#k13)" transform="matrix(0.3712 -0.0148 0.0596 0.7819 361.6 151.8)"/>
<use href="#txd" clip-path="url(#k14)" transform="matrix(0.3702 0.0081 0.0587 0.7704 361.7 152.0)"/>
<use href="#txd" clip-path="url(#k15)" transform="matrix(0.3692 0.0304 0.0578 0.7591 361.9 152.7)"/>
<use href="#txd" clip-path="url(#k16)" transform="matrix(0.3681 0.0520 0.0570 0.7480 362.2 154.0)"/>
<use href="#txd" clip-path="url(#k17)" transform="matrix(0.3671 0.0730 0.0562 0.7372 362.4 155.9)"/>
<path d="M419.6 413.8L400.3 147.4" stroke="#267933" stroke-width="1"/>
<polygon points="404.8,160.8 438.4,156.2 455,409.5 422.1,402" fill="#206d2c"/>
<polygon points="405.4,160.7 437.7,156.3 438.2,164 405.9,168" fill="#247430"/>
<polygon points="405.7,168 438.4,164 438.9,171.7 406.2,175.4" fill="#18531f"/>
<polygon points="406.9,175.6 431.7,172.4 434.2,169.5 438.1,169 438.5,175.3 407.1,178.7" fill="#3dc355"/>
<polygon points="407.1,178.9 438.5,175.5 438.9,181.4 407.5,184.5" fill="#1f6c2c"/>
<polygon points="407.5,184.8 438.9,181.7 439.3,187.3 407.9,190.1" fill="#2b8e3f"/>
<polygon points="407.5,190.4 439.8,187.5 440.6,200.4 408.4,202.7" fill="#247430"/>
<polygon points="408.2,202.5 440.8,200.2 441,203.2 408.4,205.3" fill="#18531f"/>
<polygon points="409,205.3 433.8,203.3 436.3,200.7 440.2,200.5 440.6,206.3 409.2,208.2" fill="#3dc355"/>
<polygon points="408.8,208.4 441,206.4 441.4,212.5 409.2,214.2" fill="#247430"/>
<polygon points="409.1,214.7 441.7,213 442,218.6 409.4,220.1" fill="#2c8f3f"/>
<polygon points="409.9,220.5 441.6,219.1 454.1,408.5 422.9,401.5" fill="#247430"/>
<use href="#txd" clip-path="url(#k12)" transform="matrix(0.4202 -0.0434 0.0580 0.8441 398.6 146.3)"/>
<use href="#txd" clip-path="url(#k13)" transform="matrix(0.4187 -0.0167 0.0571 0.8307 398.8 145.8)"/>
<use href="#txd" clip-path="url(#k14)" transform="matrix(0.4172 0.0092 0.0562 0.8177 399.0 146.0)"/>
<use href="#txd" clip-path="url(#k15)" transform="matrix(0.4156 0.0342 0.0553 0.8050 399.2 146.8)"/>
<use href="#txd" clip-path="url(#k16)" transform="matrix(0.4141 0.0585 0.0545 0.7925 399.5 148.3)"/>
<use href="#txd" clip-path="url(#k17)" transform="matrix(0.4126 0.0821 0.0536 0.7804 399.8 150.4)"/>
<path d="M460.7 423.9L442.4 140.8" stroke="#267933" stroke-width="1"/>
<polygon points="447.4,155 485.7,149.8 501,420 463.8,411.5" fill="#206d2c"/>
<polygon points="448.1,154.9 484.9,149.9 485.4,158.1 448.6,162.7" fill="#247430"/>
<polygon points="448.4,162.7 485.6,158.1 486.1,166.4 448.9,170.6" fill="#18531f"/>
<polygon points="449.6,170.8 477.9,167.2 480.7,164 485.2,163.5 485.6,170.3 449.8,174.1" fill="#3dc355"/>
<polygon points="449.8,174.3 485.6,170.4 485.9,176.7 450.2,180.3" fill="#1f6c2c"/>
<polygon points="450.2,180.6 486,177.1 486.3,183.1 450.6,186.3" fill="#2b8e3f"/>
<polygon points="450.1,186.6 486.8,183.3 487.6,197.1 451,199.7" fill="#247430"/>
<polygon points="450.7,199.4 487.8,196.8 488,200 450.9,202.5" fill="#18531f"/>
<polygon points="451.6,202.5 479.8,200.2 482.6,197.4 487.1,197.1 487.5,203.3 451.8,205.6" fill="#3dc355"/>
<polygon points="451.4,205.8 488,203.5 488.3,210 451.8,211.9" fill="#247430"/>
<polygon points="451.6,212.5 488.6,210.5 489,216.5 451.9,218.2" fill="#2c8f3f"/>
<polygon points="452.4,218.6 488.5,217 500,418.9 464.7,410.9" fill="#247430"/>
<use href="#txd" clip-path="url(#k12)" transform="matrix(0.4781 -0.0494 0.0543 0.9012 440.7 139.5)"/>
<use href="#txd" clip-path="url(#k13)" transform="matrix(0.4759 -0.0190 0.0534 0.8860 440.8 139.0)"/>
<use href="#txd" clip-path="url(#k14)" transform="matrix(0.4737 0.0104 0.0525 0.8712 441.1 139.2)"/>
<use href="#txd" clip-path="url(#k15)" transform="matrix(0.4715 0.0388 0.0517 0.8568 441.3 140.1)"/>
<use href="#txd" clip-path="url(#k16)" transform="matrix(0.4693 0.0663 0.0508 0.8427 441.6 141.8)"/>
<use href="#txd" clip-path="url(#k17)" transform="matrix(0.4671 0.0929 0.0500 0.8290 442.0 144.1)"/>
<path d="M507.1 435.4L490.3 133.3" stroke="#267933" stroke-width="1"/>
<polygon points="496,148.4 540,142.5 553.5,431.9 511.1,422.3" fill="#206d2c"/>
<polygon points="496.8,148.3 539.1,142.6 539.5,151.4 497.3,156.7" fill="#247430"/>
<polygon points="497,156.7 539.8,151.4 540.2,160.3 497.5,165.1" fill="#18531f"/>
<polygon points="498.3,165.3 530.8,161.2 534,157.8 539.2,157.2 539.5,164.4 498.5,168.9" fill="#3dc355"/>
<polygon points="498.5,169.1 539.5,164.6 539.9,171.4 498.8,175.4" fill="#1f6c2c"/>
<polygon points="498.8,175.8 539.9,171.8 540.2,178.2 499.2,181.9" fill="#2b8e3f"/>
<polygon points="498.7,182.2 540.8,178.5 541.5,193.3 499.4,196.3" fill="#247430"/>
<polygon points="499.2,196 541.7,193 541.9,196.4 499.3,199.3" fill="#18531f"/>
<polygon points="500.1,199.3 532.5,196.7 535.7,193.7 540.9,193.3 541.2,200 500.3,202.5" fill="#3dc355"/>
<polygon points="499.8,202.8 541.8,200.2 542.1,207.1 500.2,209.4" fill="#247430"/>
<polygon points="499.9,209.9 542.4,207.7 542.7,214.1 500.3,216" fill="#2c8f3f"/>
<polygon points="500.8,216.5 542.2,214.7 552.3,430.8 512,421.6" fill="#247430"/>
<use href="#txd" clip-path="url(#k12)" transform="matrix(0.5490 -0.0567 0.0490 0.9666 488.5 131.8)"/>
<use href="#txd" clip-path="url(#k13)" transform="matrix(0.5457 -0.0218 0.0481 0.9492 488.7 131.2)"/>
<use href="#txd" clip-path="url(#k14)" transform="matrix(0.5425 0.0119 0.0472 0.9322 489.0 131.4)"/>
<use href="#txd" clip-path="url(#k15)" transform="matrix(0.5394 0.0444 0.0464 0.9157 489.3 132.5)"/>
<use href="#txd" clip-path="url(#k16)" transform="matrix(0.5362 0.0758 0.0456 0.8996 489.7 134.4)"/>
<use href="#txd" clip-path="url(#k17)" transform="matrix(0.5331 0.1061 0.0448 0.8840 490.0 137.1)"/>
<path d="M560.1 448.4L545.3 124.7" stroke="#267933" stroke-width="1"/>
<polygon points="551.9,140.9 602.9,134 613.8,445.6 565,434.5" fill="#206d2c"/>
<polygon points="552.8,140.8 601.9,134.1 602.2,143.6 553.2,149.7" fill="#247430"/>
<polygon points="552.9,149.8 602.6,143.6 602.9,153.2 553.3,158.8" fill="#18531f"/>
<polygon points="554.2,159 591.9,154.3 595.8,150.6 601.8,149.9 602.1,157.7 554.4,162.8" fill="#3dc355"/>
<polygon points="554.4,163 602.1,157.9 602.3,165.2 554.7,169.9" fill="#1f6c2c"/>
<polygon points="554.7,170.3 602.3,165.7 602.6,172.6 555,176.9" fill="#2b8e3f"/>
<polygon points="554.4,177.2 603.3,172.9 603.8,188.9 555.1,192.3" fill="#247430"/>
<polygon points="554.8,192 604.2,188.5 604.3,192.2 555,195.5" fill="#18531f"/>
<polygon points="555.9,195.5 593.3,192.6 597.2,189.3 603.2,188.9 603.4,196.1 556,199.1" fill="#3dc355"/>
<polygon points="555.4,199.3 604.1,196.3 604.4,203.8 555.7,206.4" fill="#247430"/>
<polygon points="555.5,207 604.7,204.4 605,211.4 555.8,213.6" fill="#2c8f3f"/>
<polygon points="556.4,214 604.3,211.9 612.5,444.4 566.1,433.9" fill="#247430"/>
<use href="#txd" clip-path="url(#k18)" transform="matrix(0.6377 -0.0740 0.0414 1.0464 543.4 123.3)"/>
<use href="#txd" clip-path="url(#k19)" transform="matrix(0.6349 -0.0493 0.0409 1.0342 543.6 122.6)"/>
<use href="#txd" clip-path="url(#k20)" transform="matrix(0.6321 -0.0251 0.0404 1.0221 543.8 122.3)"/>
<use href="#txd" clip-path="url(#k21)" transform="matrix(0.6294 -0.0015 0.0400 1.0102 544.0 122.3)"/>
<use href="#txd" clip-path="url(#k22)" transform="matrix(0.6267 0.0215 0.0395 0.9986 544.2 122.7)"/>
<use href="#txd" clip-path="url(#k23)" transform="matrix(0.6240 0.0440 0.0391 0.9871 544.4 123.5)"/>
<use href="#txd" clip-path="url(#k24)" transform="matrix(0.6213 0.0660 0.0386 0.9759 544.6 124.6)"/>
<use href="#txd" clip-path="url(#k25)" transform="matrix(0.6186 0.0875 0.0382 0.9648 544.9 126.0)"/>
<use href="#txd" clip-path="url(#k26)" transform="matrix(0.6160 0.1086 0.0378 0.9539 545.1 127.8)"/>
<use href="#txd" clip-path="url(#k27)" transform="matrix(0.6134 0.1291 0.0373 0.9432 545.4 129.8)"/>
<path d="M620.9 463.4L609.2 114.6" stroke="#267933" stroke-width="1"/>
<polygon points="616.9,132.1 676.8,124 684,461.6 627.1,448.7" fill="#206d2c"/>
<polygon points="617.9,131.9 675.6,124.1 675.8,134.5 618.2,141.6" fill="#247430"/>
<polygon points="617.9,141.7 676.2,134.5 676.4,144.9 618.2,151.5" fill="#18531f"/>
<polygon points="619.3,151.7 663.5,146.2 668.1,142.1 675.2,141.3 675.3,149.8 619.4,155.9" fill="#3dc355"/>
<polygon points="619.4,156.1 675.4,150.1 675.5,158 619.7,163.5" fill="#1f6c2c"/>
<polygon points="619.7,164 675.5,158.5 675.7,166 619.9,171" fill="#2b8e3f"/>
<polygon points="619.2,171.4 676.5,166.3 676.9,183.7 619.7,187.7" fill="#247430"/>
<polygon points="619.4,187.4 677.3,183.3 677.3,187.3 619.5,191.2" fill="#18531f"/>
<polygon points="620.5,191.2 664.5,187.8 669,184.2 676.1,183.7 676.3,191.6 620.7,195" fill="#3dc355"/>
<polygon points="620,195.3 677,191.8 677.2,199.9 620.2,203" fill="#247430"/>
<polygon points="619.9,203.6 677.6,200.6 677.8,208.1 620.1,210.7" fill="#2c8f3f"/>
<polygon points="620.8,211.2 677,208.8 682.4,460.2 628.4,448" fill="#247430"/>
<use href="#txd" clip-path="url(#k18)" transform="matrix(0.7488 -0.0869 0.0302 1.1357 607.2 113.0)"/>
<use href="#txd" clip-path="url(#k19)" transform="matrix(0.7448 -0.0578 0.0299 1.1213 607.5 112.2)"/>
<use href="#txd" clip-path="url(#k20)" transform="matrix(0.7408 -0.0295 0.0295 1.1071 607.7 111.8)"/>
<use href="#txd" clip-path="url(#k21)" transform="matrix(0.7369 -0.0018 0.0291 1.0932 607.9 111.9)"/>
<use href="#txd" clip-path="url(#k22)" transform="matrix(0.7330 0.0251 0.0288 1.0796 608.2 112.4)"/>
<use href="#txd" clip-path="url(#k23)" transform="matrix(0.7292 0.0514 0.0284 1.0662 608.5 113.3)"/>
<use href="#txd" clip-path="url(#k24)" transform="matrix(0.7254 0.0771 0.0281 1.0531 608.7 114.6)"/>
<use href="#txd" clip-path="url(#k25)" transform="matrix(0.7216 0.1021 0.0277 1.0402 609.0 116.2)"/>
<use href="#txd" clip-path="url(#k26)" transform="matrix(0.7179 0.1265 0.0274 1.0275 609.3 118.3)"/>
<use href="#txd" clip-path="url(#k27)" transform="matrix(0.7142 0.1503 0.0271 1.0151 609.6 120.6)"/>
<path d="M691.7 480.8L684.3 102.9" stroke="#267933" stroke-width="1"/>
<polygon points="693.3,121.7 764.7,112.1 766.5,480.4 699.6,465.1" fill="#206d2c"/>
<polygon points="694.6,121.6 763.3,112.3 763.3,123.6 694.7,132.2" fill="#247430"/>
<polygon points="694.3,132.2 763.8,123.6 763.8,135 694.5,142.9" fill="#18531f"/>
<polygon points="695.8,143.1 748.3,136.6 753.9,132.1 762.4,131.1 762.4,140.5 695.9,147.6" fill="#3dc355"/>
<polygon points="695.9,147.9 762.4,140.7 762.5,149.4 696,156" fill="#1f6c2c"/>
<polygon points="696,156.5 762.5,149.9 762.5,158.2 696.1,164.2" fill="#2b8e3f"/>
<polygon points="695.3,164.6 763.5,158.5 763.6,177.5 695.6,182.3" fill="#247430"/>
<polygon points="695.2,182 764.1,177.1 764.1,181.5 695.3,186.1" fill="#18531f"/>
<polygon points="696.5,186.1 748.7,182.1 754.2,178.2 762.6,177.6 762.7,186.2 696.6,190.3" fill="#3dc355"/>
<polygon points="695.8,190.6 763.6,186.4 763.7,195.3 695.9,198.9" fill="#247430"/>
<polygon points="695.5,199.6 764.2,196 764.2,204.3 695.7,207.4" fill="#2c8f3f"/>
<polygon points="696.5,207.9 763.3,205 764.7,478.9 701.1,464.4" fill="#247430"/>
<use href="#txd" clip-path="url(#k18)" transform="matrix(0.8917 -0.1035 0.0141 1.2417 682.2 101.0)"/>
<use href="#txd" clip-path="url(#k19)" transform="matrix(0.8859 -0.0688 0.0139 1.2245 682.5 100.0)"/>
<use href="#txd" clip-path="url(#k20)" transform="matrix(0.8802 -0.0350 0.0137 1.2076 682.8 99.5)"/>
<use href="#txd" clip-path="url(#k21)" transform="matrix(0.8745 -0.0022 0.0136 1.1911 683.1 99.6)"/>
<use href="#txd" clip-path="url(#k22)" transform="matrix(0.8689 0.0298 0.0134 1.1749 683.5 100.2)"/>
<use href="#txd" clip-path="url(#k23)" transform="matrix(0.8634 0.0609 0.0132 1.1591 683.8 101.2)"/>
<use href="#txd" clip-path="url(#k24)" transform="matrix(0.8580 0.0912 0.0130 1.1435 684.1 102.8)"/>
<use href="#txd" clip-path="url(#k25)" transform="matrix(0.8526 0.1206 0.0129 1.1283 684.4 104.7)"/>
<use href="#txd" clip-path="url(#k26)" transform="matrix(0.8473 0.1493 0.0127 1.1134 684.7 107.1)"/>
<use href="#txd" clip-path="url(#k27)" transform="matrix(0.8421 0.1772 0.0125 1.0988 685.1 109.9)"/>
<path d="M775.1 501.3L773.7 88.8" stroke="#267933" stroke-width="1"/>
<polygon points="784.5,109.4 871,97.7 865.1,502.8 785,484.6" fill="#206d2c"/>
<polygon points="786,109.2 869.3,97.9 869.1,110.5 786,120.8" fill="#247430"/>
<polygon points="785.5,120.9 869.7,110.4 869.5,123.1 785.5,132.6" fill="#18531f"/>
<polygon points="787,132.8 850.6,125.1 857.5,120 867.8,118.8 867.7,129.1 787,137.8" fill="#3dc355"/>
<polygon points="787,138.1 867.7,129.4 867.5,139 787.1,147" fill="#1f6c2c"/>
<polygon points="787.1,147.5 867.5,139.6 867.4,148.8 787.1,156" fill="#2b8e3f"/>
<polygon points="786.1,156.5 868.5,149.1 868.2,170.1 786.1,175.9" fill="#247430"/>
<polygon points="785.6,175.6 868.8,169.7 868.8,174.5 785.6,180.1" fill="#18531f"/>
<polygon points="787.1,180.1 850.1,175.3 856.8,170.9 867.1,170.2 867,179.7 787.1,184.7" fill="#3dc355"/>
<polygon points="786.1,185 868.1,179.9 868,189.7 786.1,194.1" fill="#247430"/>
<polygon points="785.6,194.9 868.5,190.5 868.4,199.7 785.6,203.4" fill="#2c8f3f"/>
<polygon points="786.6,204 867.2,200.4 863,501.1 786.9,483.9" fill="#247430"/>
<use href="#txd" clip-path="url(#k28)" transform="matrix(1.0373 -0.1237 -0.0034 1.3420 771.9 87.5)"/>
<use href="#txd" clip-path="url(#k29)" transform="matrix(1.0307 -0.0898 -0.0033 1.3253 772.1 87.1)"/>
<use href="#txd" clip-path="url(#k30)" transform="matrix(1.0242 -0.0568 -0.0033 1.3089 772.3 87.2)"/>
<use href="#txd" clip-path="url(#k31)" transform="matrix(1.0178 -0.0246 -0.0032 1.2927 772.5 87.6)"/>
<use href="#txd" clip-path="url(#k32)" transform="matrix(1.0115 0.0069 -0.0032 1.2769 772.7 88.5)"/>
<use href="#txd" clip-path="url(#k33)" transform="matrix(1.0053 0.0376 -0.0032 1.2614 772.9 89.7)"/>
<use href="#txd" clip-path="url(#k34)" transform="matrix(0.9991 0.0675 -0.0031 1.2462 773.1 91.4)"/>
<use href="#txd" clip-path="url(#k35)" transform="matrix(0.9930 0.0967 -0.0031 1.2312 773.3 93.3)"/>
<use href="#txd" clip-path="url(#k36)" transform="matrix(0.9870 0.1252 -0.0031 1.2165 773.5 95.6)"/>
<use href="#txd" clip-path="url(#k37)" transform="matrix(0.9810 0.1531 -0.0030 1.2020 773.6 98.3)"/>
<use href="#txd" clip-path="url(#k38)" transform="matrix(0.9752 0.1802 -0.0030 1.1879 773.8 101.3)"/>
<use href="#txd" clip-path="url(#k39)" transform="matrix(0.9694 0.2068 -0.0029 1.1739 774.0 104.5)"/>
<use href="#txd" clip-path="url(#k40)" transform="matrix(1.1238 -0.1340 -0.0146 1.3982 767.7 86.3)"/>
<use href="#txd" clip-path="url(#k41)" transform="matrix(1.1161 -0.0973 -0.0145 1.3801 768.2 84.5)"/>
<use href="#txd" clip-path="url(#k42)" transform="matrix(1.1085 -0.0615 -0.0143 1.3623 768.8 83.1)"/>
<use href="#txd" clip-path="url(#k43)" transform="matrix(1.1010 -0.0266 -0.0141 1.3448 769.3 82.2)"/>
<use href="#txd" clip-path="url(#k44)" transform="matrix(1.0937 0.0074 -0.0139 1.3277 769.8 81.8)"/>
<use href="#txd" clip-path="url(#k45)" transform="matrix(1.0864 0.0406 -0.0137 1.3110 770.3 81.8)"/>
<use href="#txd" clip-path="url(#k46)" transform="matrix(1.0792 0.0729 -0.0136 1.2945 770.8 82.3)"/>
<use href="#txd" clip-path="url(#k47)" transform="matrix(1.0721 0.1044 -0.0134 1.2783 771.3 83.1)"/>
<use href="#txd" clip-path="url(#k48)" transform="matrix(1.0651 0.1352 -0.0132 1.2625 771.7 84.4)"/>
<use href="#txd" clip-path="url(#k49)" transform="matrix(1.0582 0.1651 -0.0130 1.2469 772.2 86.1)"/>
<use href="#txd" clip-path="url(#k50)" transform="matrix(1.0514 0.1943 -0.0129 1.2316 772.7 88.1)"/>
<use href="#txd" clip-path="url(#k51)" transform="matrix(1.0447 0.2228 -0.0127 1.2166 773.1 90.5)"/>
<path d="M874.6 525.8L882.1 71.8" stroke="#267933" stroke-width="1"/>
<polygon points="895.3,94.4 1002.3,79.9 984.9,530.1 887.4,507.9" fill="#206d2c"/>
<polygon points="897.1,94.1 1000.1,80.2 999.5,94.3 896.9,107.1" fill="#247430"/>
<polygon points="896.2,107.1 1000.3,94.2 999.7,108.4 896,120.1" fill="#18531f"/>
<polygon points="897.8,120.4 976.2,110.9 984.9,105.1 997.7,103.6 997.3,115.2 897.7,125.9" fill="#3dc355"/>
<polygon points="897.7,126.2 997.3,115.5 996.9,126.3 897.5,136.1" fill="#1f6c2c"/>
<polygon points="897.5,136.7 996.9,126.9 996.5,137.1 897.3,146.1" fill="#2b8e3f"/>
<polygon points="896.1,146.6 997.9,137.5 997,161 895.7,168.2" fill="#247430"/>
<polygon points="895.1,167.8 997.7,160.5 997.5,165.9 895,172.8" fill="#18531f"/>
<polygon points="896.8,172.8 974.3,167 982.8,162 995.6,161.1 995.2,171.7 896.7,177.8" fill="#3dc355"/>
<polygon points="895.5,178.2 996.6,171.9 996.2,182.9 895.3,188.3" fill="#247430"/>
<polygon points="894.7,189.2 996.8,183.8 996.5,194 894.5,198.5" fill="#2c8f3f"/>
<polygon points="895.7,199.2 995,194.8 982.3,528.1 889.7,507.1" fill="#247430"/>
<use href="#txd" clip-path="url(#k28)" transform="matrix(1.2761 -0.1522 -0.0354 1.4923 880.3 70.2)"/>
<use href="#txd" clip-path="url(#k29)" transform="matrix(1.2663 -0.1104 -0.0349 1.4717 880.6 69.7)"/>
<use href="#txd" clip-path="url(#k30)" transform="matrix(1.2566 -0.0697 -0.0345 1.4515 880.9 69.8)"/>
<use href="#txd" clip-path="url(#k31)" transform="matrix(1.2471 -0.0301 -0.0340 1.4318 881.1 70.3)"/>
<use href="#txd" clip-path="url(#k32)" transform="matrix(1.2377 0.0084 -0.0335 1.4124 881.4 71.4)"/>
<use href="#txd" clip-path="url(#k33)" transform="matrix(1.2285 0.0459 -0.0331 1.3934 881.6 72.9)"/>
<use href="#txd" clip-path="url(#k34)" transform="matrix(1.2194 0.0824 -0.0326 1.3748 881.8 74.9)"/>
<use href="#txd" clip-path="url(#k35)" transform="matrix(1.2104 0.1179 -0.0322 1.3566 882.0 77.3)"/>
<use href="#txd" clip-path="url(#k36)" transform="matrix(1.2016 0.1525 -0.0318 1.3387 882.2 80.1)"/>
<use href="#txd" clip-path="url(#k37)" transform="matrix(1.1929 0.1861 -0.0313 1.3212 882.4 83.3)"/>
<use href="#txd" clip-path="url(#k38)" transform="matrix(1.1843 0.2189 -0.0309 1.3040 882.6 86.9)"/>
<use href="#txd" clip-path="url(#k39)" transform="matrix(1.1759 0.2508 -0.0305 1.2872 882.7 90.9)"/>
<use href="#txd" clip-path="url(#k40)" transform="matrix(1.3949 -0.1664 -0.0524 1.5621 874.6 68.8)"/>
<use href="#txd" clip-path="url(#k41)" transform="matrix(1.3833 -0.1206 -0.0516 1.5396 875.4 66.5)"/>
<use href="#txd" clip-path="url(#k42)" transform="matrix(1.3719 -0.0761 -0.0509 1.5175 876.2 64.8)"/>
<use href="#txd" clip-path="url(#k43)" transform="matrix(1.3607 -0.0329 -0.0501 1.4959 876.9 63.7)"/>
<use href="#txd" clip-path="url(#k44)" transform="matrix(1.3497 0.0092 -0.0494 1.4748 877.6 63.2)"/>
<use href="#txd" clip-path="url(#k45)" transform="matrix(1.3388 0.0500 -0.0487 1.4541 878.3 63.2)"/>
<use href="#txd" clip-path="url(#k46)" transform="matrix(1.3281 0.0897 -0.0481 1.4339 879.0 63.8)"/>
<use href="#txd" clip-path="url(#k47)" transform="matrix(1.3176 0.1283 -0.0474 1.4140 879.6 64.8)"/>
<use href="#txd" clip-path="url(#k48)" transform="matrix(1.3072 0.1659 -0.0467 1.3946 880.2 66.4)"/>
<use href="#txd" clip-path="url(#k49)" transform="matrix(1.2970 0.2024 -0.0461 1.3756 880.8 68.4)"/>
<use href="#txd" clip-path="url(#k50)" transform="matrix(1.2870 0.2379 -0.0455 1.3569 881.3 70.9)"/>
<use href="#txd" clip-path="url(#k51)" transform="matrix(1.2771 0.2724 -0.0449 1.3387 881.9 73.9)"/>
<path d="M995.6 555.5L1016.2 50.8" stroke="#267933" stroke-width="1"/>
<polygon points="1032.6,75.8 1168.4,57.4 1133.6,563.9 1012.3,536.3" fill="#206d2c"/>
<polygon points="1034.9,75.5 1165.5,57.8 1164.4,73.9 1034.3,90" fill="#247430"/>
<polygon points="1033.5,90.1 1165.4,73.7 1164.3,89.9 1032.9,104.7" fill="#18531f"/>
<polygon points="1035.1,104.9 1134.3,93 1145.4,86.3 1161.9,84.4 1161,97.6 1034.9,111.1" fill="#3dc355"/>
<polygon points="1034.8,111.5 1161,97.9 1160.1,110.1 1034.4,122.6" fill="#1f6c2c"/>
<polygon points="1034.3,123.2 1160.1,110.9 1159.3,122.5 1033.8,133.8" fill="#2b8e3f"/>
<polygon points="1032.3,134.4 1161.1,122.8 1159.3,149.5 1031.2,158.6" fill="#247430"/>
<polygon points="1030.5,158.1 1160.2,148.9 1159.8,155.1 1030.2,163.7" fill="#18531f"/>
<polygon points="1032.5,163.7 1130.3,156.5 1141.2,150.8 1157.5,149.6 1156.7,161.6 1032.3,169.4" fill="#3dc355"/>
<polygon points="1030.7,169.8 1158.5,161.8 1157.6,174.3 1030.2,181.1" fill="#247430"/>
<polygon points="1029.4,182.1 1158.4,175.3 1157.7,186.8 1029,192.5" fill="#2c8f3f"/>
<polygon points="1030.4,193.3 1155.8,187.8 1130.4,561.6 1015.2,535.5" fill="#247430"/>
<use href="#txd" clip-path="url(#k28)" transform="matrix(1.6080 -0.1918 -0.0841 1.6806 1014.4 48.7)"/>
<use href="#txd" clip-path="url(#k29)" transform="matrix(1.5929 -0.1389 -0.0828 1.6545 1014.9 48.1)"/>
<use href="#txd" clip-path="url(#k30)" transform="matrix(1.5781 -0.0876 -0.0815 1.6291 1015.2 48.2)"/>
<use href="#txd" clip-path="url(#k31)" transform="matrix(1.5636 -0.0378 -0.0802 1.6043 1015.6 48.9)"/>
<use href="#txd" clip-path="url(#k32)" transform="matrix(1.5493 0.0105 -0.0790 1.5800 1015.9 50.2)"/>
<use href="#txd" clip-path="url(#k33)" transform="matrix(1.5353 0.0573 -0.0778 1.5563 1016.2 52.1)"/>
<use href="#txd" clip-path="url(#k34)" transform="matrix(1.5216 0.1028 -0.0767 1.5331 1016.4 54.6)"/>
<use href="#txd" clip-path="url(#k35)" transform="matrix(1.5080 0.1469 -0.0755 1.5104 1016.7 57.6)"/>
<use href="#txd" clip-path="url(#k36)" transform="matrix(1.4947 0.1896 -0.0744 1.4882 1016.8 61.1)"/>
<use href="#txd" clip-path="url(#k37)" transform="matrix(1.4816 0.2312 -0.0733 1.4665 1017.0 65.1)"/>
<use href="#txd" clip-path="url(#k38)" transform="matrix(1.4688 0.2715 -0.0723 1.4453 1017.1 69.6)"/>
<use href="#txd" clip-path="url(#k39)" transform="matrix(1.4562 0.3106 -0.0712 1.4245 1017.2 74.5)"/>
<use href="#txd" clip-path="url(#k40)" transform="matrix(1.7775 -0.2121 -0.1103 1.7696 1006.4 47.1)"/>
<use href="#txd" clip-path="url(#k41)" transform="matrix(1.7595 -0.1534 -0.1085 1.7408 1007.6 44.1)"/>
<use href="#txd" clip-path="url(#k42)" transform="matrix(1.7418 -0.0967 -0.1068 1.7127 1008.7 41.9)"/>
<use href="#txd" clip-path="url(#k43)" transform="matrix(1.7244 -0.0417 -0.1051 1.6853 1009.8 40.5)"/>
<use href="#txd" clip-path="url(#k44)" transform="matrix(1.7074 0.0116 -0.1034 1.6585 1010.9 39.9)"/>
<use href="#txd" clip-path="url(#k45)" transform="matrix(1.6907 0.0631 -0.1018 1.6324 1011.8 39.9)"/>
<use href="#txd" clip-path="url(#k46)" transform="matrix(1.6743 0.1131 -0.1002 1.6069 1012.8 40.6)"/>
<use href="#txd" clip-path="url(#k47)" transform="matrix(1.6582 0.1615 -0.0986 1.5819 1013.6 42.0)"/>
<use href="#txd" clip-path="url(#k48)" transform="matrix(1.6424 0.2084 -0.0971 1.5576 1014.4 44.0)"/>
<use href="#txd" clip-path="url(#k49)" transform="matrix(1.6269 0.2538 -0.0956 1.5338 1015.2 46.5)"/>
<use href="#txd" clip-path="url(#k50)" transform="matrix(1.6116 0.2978 -0.0941 1.5105 1015.9 49.7)"/>
<use href="#txd" clip-path="url(#k51)" transform="matrix(1.5967 0.3405 -0.0927 1.4878 1016.5 53.3)"/>
</svg>
</div>
<div id="tip"></div>
<span class="t" style="left:1161px;top:400.3px;font-size:15.8px;color:#2f3542;font-weight:bold;letter-spacing:-0.133px;">Rack F - 6</span>
<span class="t" style="left:1161px;top:436.1px;font-size:12.4px;color:#2f3542;font-weight:bold;letter-spacing:0.05px;">Status:</span>
<span class="t" style="left:1205.8px;top:436.1px;font-size:12.4px;color:#3cb353;font-weight:bold;letter-spacing:0.78px;">Normal</span>
<span class="t" style="left:1161px;top:455.6px;font-size:12.4px;color:#2f3542;font-weight:bold;letter-spacing:0.15px;">Type:</span>
<span class="t" style="left:1197.1px;top:455.6px;font-size:12.4px;color:#444a55;letter-spacing:-0.2px;">Rack</span>
<span class="t" style="left:1161px;top:475.1px;font-size:12.4px;color:#2f3542;font-weight:bold;letter-spacing:0.252px;">Average Temperature Front:</span>
<span class="t" style="left:1335.8px;top:475.1px;font-size:12.4px;color:#444a55;letter-spacing:0.6px;">Unknown</span>
<span class="t" style="left:1161px;top:494.6px;font-size:12.4px;color:#2f3542;font-weight:bold;letter-spacing:0.237px;">Average Temperature Rear:</span>
<span class="t" style="left:1330.6px;top:494.6px;font-size:12.4px;color:#444a55;letter-spacing:0.633px;">Unknown</span>
<span class="t" style="left:1161px;top:514.1px;font-size:12.4px;color:#2f3542;font-weight:bold;letter-spacing:0.085px;">Largest Available Contiguous Rack Space:</span>
<span class="t" style="left:1418.9px;top:514.1px;font-size:12.4px;color:#444a55;letter-spacing:-0.433px;">0 RU</span>
<span class="t" style="left:1161px;top:533.6px;font-size:12.4px;color:#2f3542;font-weight:bold;letter-spacing:0.085px;">Rack Security:</span>
<span class="t" style="left:1249.8px;top:533.6px;font-size:12.4px;color:#8a93a3;font-weight:bold;letter-spacing:0.7px;">Unknown</span>
<span class="t" style="left:1161px;top:553.1px;font-size:12.4px;color:#2f3542;font-weight:bold;letter-spacing:-0.024px;">Rack Space Efficiency:</span>
<span class="t" style="left:1298.7px;top:553.1px;font-size:12.4px;color:#444a55;letter-spacing:0.014px;">100.00 %</span>
<span class="t" style="left:1161px;top:572.6px;font-size:12.4px;color:#2f3542;font-weight:bold;letter-spacing:0.237px;">Rack Total Power:</span>
<span class="t" style="left:1274px;top:572.6px;font-size:12.4px;color:#444a55;letter-spacing:0.183px;">0 Watts</span>
<span class="t" style="left:1161px;top:592.1px;font-size:12.4px;color:#2f3542;font-weight:bold;letter-spacing:0.319px;">Rack Utilization:</span>
<span class="t" style="left:1264.3px;top:592.1px;font-size:12.4px;color:#444a55;letter-spacing:-0.029px;">100.00 %</span>
<span class="t" style="left:1161px;top:611.6px;font-size:12.4px;color:#2f3542;font-weight:bold;letter-spacing:0.081px;">Total Available Rack Space:</span>
<span class="t" style="left:1330px;top:611.6px;font-size:12.4px;color:#444a55;letter-spacing:-0.233px;">0 RU</span>
<div id="strip"></div>
<svg class="abs" style="left:252px;top:11px" width="24" height="24" viewBox="252 11 24 24" fill="none" stroke="#93a0b5" stroke-width="1" stroke-linecap="round" stroke-linejoin="round"><circle cx="264" cy="23.5" r="8.2"/><path d="M259.8 23.5h8M264.9 20.2L268.1 23.5L264.9 26.8"/></svg>
<div id="side">
<div class="hdr"></div>
<span class="t" style="left:10.2px;top:7.6px;font-size:26px;color:#ffffff;letter-spacing:-1.525px;">hyperview</span>
<svg class="abs" style="left:204px;top:12px" width="24" height="24" viewBox="204 12 24 24" fill="none" stroke="#d0d0d0" stroke-width="1" stroke-linecap="round" stroke-linejoin="round"><path d="M207 17.5h17.2M207 23.5h17.2M207 29.5h17.2" stroke-linecap="butt"/></svg>
<svg class="abs" style="left:12px;top:60px" width="24" height="24" viewBox="12 60 24 24" fill="none" stroke="#bdbdbd" stroke-width="1" stroke-linecap="round" stroke-linejoin="round"><circle cx="22" cy="70" r="6.5"/><path d="M26.7 74.7L31.7 79.7"/></svg>
<span class="t" style="left:48px;top:66.8px;font-size:12.6px;color:#cdcdcd;letter-spacing:-0.12px;">Search</span>
<div class="abs act" style="left:0;top:96px;width:240px;height:48px"></div>
<svg class="abs" style="left:12px;top:108px" width="24" height="24" viewBox="12 108 24 24" fill="none" stroke="#fff" stroke-width="1.3" stroke-linecap="round" stroke-linejoin="round"><path d="M21.2 123.7C21.2 122.3 20.4 121.6 19.5 120.6A5.9 5.9 0 1 1 27.5 120.6C26.6 121.6 25.8 122.3 25.8 123.7V126.6A2.3 2.2 0 0 1 21.2 126.6Z"/><path d="M21.2 123.8h4.6"/><circle cx="23.5" cy="125.9" r="0.8"/></svg>
<span class="t" style="left:48px;top:115px;font-size:12.6px;color:#ffffff;letter-spacing:-0.28px;">Assets</span>
<svg class="abs" style="left:209px;top:110px" width="19" height="19" viewBox="209 110 19 19" fill="none" stroke="#fff" stroke-width="1.25" stroke-linecap="round" stroke-linejoin="round"><circle cx="218.5" cy="119.5" r="6.5"/><path d="M215.2 119.5h6.6"/></svg>
<span class="t" style="left:48px;top:157px;font-size:12.6px;color:#6ba5ea;letter-spacing:0.043px;">Overview</span>
<span class="t" style="left:48px;top:193px;font-size:12.6px;color:#cdcdcd;letter-spacing:0.3px;">Add New</span>
<span class="t" style="left:48px;top:229px;font-size:12.6px;color:#cdcdcd;letter-spacing:-0.264px;">AssetTracker</span>
<span class="t" style="left:48px;top:265px;font-size:12.6px;color:#cdcdcd;letter-spacing:0.31px;">Bulk Import</span>
<span class="t" style="left:48px;top:301px;font-size:12.6px;color:#cdcdcd;letter-spacing:0.325px;">Documents</span>
<span class="t" style="left:48px;top:337px;font-size:12.6px;color:#cdcdcd;letter-spacing:0.1px;">Firmware</span>
<span class="t" style="left:48px;top:379px;font-size:12.6px;color:#cdcdcd;letter-spacing:-0.03px;">Discoveries</span>
<span class="t" style="left:48px;top:427px;font-size:12.6px;color:#cdcdcd;letter-spacing:0.25px;">Catalog</span>
<span class="t" style="left:48px;top:475px;font-size:12.6px;color:#cdcdcd;letter-spacing:0.067px;">Logs</span>
<span class="t" style="left:48px;top:523px;font-size:12.6px;color:#cdcdcd;letter-spacing:0.229px;">Settings</span>
<span class="t" style="left:48px;top:571px;font-size:12.6px;color:#cdcdcd;letter-spacing:0.4px;">Help</span>
<span class="t" style="left:48px;top:941px;font-size:12.6px;color:#cdcdcd;letter-spacing:0.167px;">Account</span>
<svg class="abs" style="left:12px;top:372px" width="24" height="24" viewBox="12 372 24 24" fill="none" stroke="#bdbdbd" stroke-width="1" stroke-linecap="round" stroke-linejoin="round"><path d="M15.2 384.4C17.6 380.9 20.5 379.3 23.5 379.3S29.4 380.9 31.8 384.4C29.4 387.9 26.5 389.5 23.5 389.5S17.6 387.9 15.2 384.4Z"/><circle cx="23.5" cy="384.4" r="2.2"/></svg>
<svg class="abs" style="left:12px;top:420px" width="24" height="24" viewBox="12 420 24 24" fill="none" stroke="#bdbdbd" stroke-width="1" stroke-linecap="round" stroke-linejoin="round"><path d="M23.5 426.6C21 425.3 18.3 424.7 15.5 424.6V438C18.3 438.1 21 438.7 23.5 440.2C26 438.7 28.7 438.1 31.5 438V424.6C28.7 424.7 26 425.3 23.5 426.6ZM23.5 426.6V440.2M17.4 427.8C18.9 428 20.3 428.4 21.6 429M29.6 427.8C28.1 428 26.7 428.4 25.4 429M17.4 430.4C18.9 430.6 20.3 431 21.6 431.6M29.6 430.4C28.1 430.6 26.7 431 25.4 431.6M17.4 433C18.9 433.2 20.3 433.6 21.6 434.2M29.6 433C28.1 433.2 26.7 433.6 25.4 434.2M17.4 435.6C18.9 435.8 20.3 436.2 21.6 436.8M29.6 435.6C28.1 435.8 26.7 436.2 25.4 436.8"/></svg>
<svg class="abs" style="left:12px;top:468px" width="24" height="24" viewBox="12 468 24 24" fill="none" stroke="#c8c8c8" stroke-width="1" stroke-linecap="round" stroke-linejoin="round"><path d="M18.5 476.5H32M18.5 480.5H32M18.5 484.5H32M15 476.5h1.2M15 480.5h1.2M15 484.5h1.2" stroke-linecap="butt"/></svg>
<svg class="abs" style="left:12px;top:516px" width="24" height="24" viewBox="12 516 24 24" fill="none" stroke="#bdbdbd" stroke-width="1" stroke-linecap="round" stroke-linejoin="round"><path d="M22.18 520.31L24.82 520.31L24.94 522.37L26.82 523.15L28.36 521.77L30.23 523.64L28.85 525.18L29.63 527.06L31.69 527.18L31.69 529.82L29.63 529.94L28.85 531.82L30.23 533.36L28.36 535.23L26.82 533.85L24.94 534.63L24.82 536.69L22.18 536.69L22.06 534.63L20.18 533.85L18.64 535.23L16.77 533.36L18.15 531.82L17.37 529.94L15.31 529.82L15.31 527.18L17.37 527.06L18.15 525.18L16.77 523.64L18.64 521.77L20.18 523.15L22.06 522.37Z"/><circle cx="23.5" cy="528.5" r="3.1"/></svg>
<svg class="abs" style="left:12px;top:564px" width="24" height="24" viewBox="12 564 24 24" fill="none" stroke="#bdbdbd" stroke-width="1" stroke-linecap="round" stroke-linejoin="round"><circle cx="23.5" cy="576.5" r="8"/><path d="M21 574.2C21.1 572.7 22.2 571.9 23.6 571.9C25 571.9 26.1 572.8 26.1 574.1C26.1 575.9 23.7 576.1 23.7 578.3"/><path d="M23.7 580.6v0.5"/></svg>
<div class="abs acct" style="left:0;top:921px;width:240px;height:47px"></div>
<svg class="abs" style="left:12px;top:933px" width="24" height="24" viewBox="12 933 24 24" fill="none" stroke="#bdbdbd" stroke-width="1" stroke-linecap="round" stroke-linejoin="round"><path d="M23.5 937.5C25.7 937.5 27.2 939.2 27.2 941.7C27.2 943.7 26.3 945.3 25.4 946.1V947.5C28 948.3 31.2 949.5 31.7 950.8V953.5H15.3V950.8C15.8 949.5 19 948.3 21.6 947.5V946.1C20.7 945.3 19.8 943.7 19.8 941.7C19.8 939.2 21.3 937.5 23.5 937.5Z"/></svg>
<svg class="abs" style="left:209px;top:374px" width="19" height="19" viewBox="209 374 19 19" fill="none" stroke="#bdbdbd" stroke-width="1" stroke-linecap="round" stroke-linejoin="round"><circle cx="218.5" cy="383.5" r="6.5"/><path d="M215 383.5h7M218.5 380v7"/></svg>
<svg class="abs" style="left:209px;top:422px" width="19" height="19" viewBox="209 422 19 19" fill="none" stroke="#bdbdbd" stroke-width="1" stroke-linecap="round" stroke-linejoin="round"><circle cx="218.5" cy="431.5" r="6.5"/><path d="M215 431.5h7M218.5 428v7"/></svg>
<svg class="abs" style="left:209px;top:470px" width="19" height="19" viewBox="209 470 19 19" fill="none" stroke="#bdbdbd" stroke-width="1" stroke-linecap="round" stroke-linejoin="round"><circle cx="218.5" cy="479.5" r="6.5"/><path d="M215 479.5h7M218.5 476v7"/></svg>
<svg class="abs" style="left:209px;top:518px" width="19" height="19" viewBox="209 518 19 19" fill="none" stroke="#bdbdbd" stroke-width="1" stroke-linecap="round" stroke-linejoin="round"><circle cx="218.5" cy="527.5" r="6.5"/><path d="M215 527.5h7M218.5 524v7"/></svg>
<svg class="abs" style="left:209px;top:566px" width="19" height="19" viewBox="209 566 19 19" fill="none" stroke="#bdbdbd" stroke-width="1" stroke-linecap="round" stroke-linejoin="round"><circle cx="218.5" cy="575.5" r="6.5"/><path d="M215 575.5h7M218.5 572v7"/></svg>
<svg class="abs" style="left:209px;top:936px" width="19" height="19" viewBox="209 936 19 19" fill="none" stroke="#bdbdbd" stroke-width="1" stroke-linecap="round" stroke-linejoin="round"><circle cx="218.5" cy="945.5" r="6.5"/><path d="M215 945.5h7M218.5 942v7"/></svg>
</div>
</body>
</html>
